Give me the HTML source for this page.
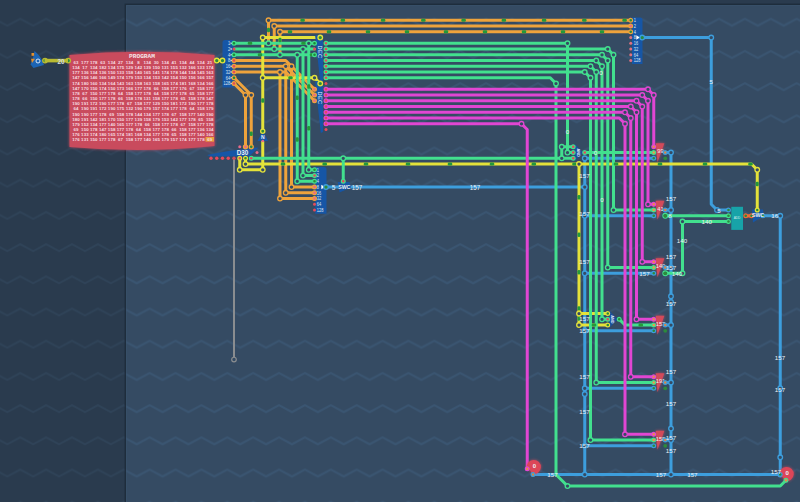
<!DOCTYPE html>
<html><head><meta charset="utf-8">
<style>html,body{margin:0;padding:0;background:#2a3b4e;width:800px;height:502px;overflow:hidden}
svg{display:block;font-family:"Liberation Sans",sans-serif}</style></head>
<body>
<svg width="800" height="502" viewBox="0 0 800 502">
<defs>
<pattern id="zo" x="20.25" y="14.75" width="25.88" height="32.2" patternUnits="userSpaceOnUse">
<path d="M-12.94 11 L0 4 L12.94 11 L25.88 4 L38.82 11" stroke="#2f4358" stroke-width="1.8" fill="none"/>
</pattern>
<pattern id="zp" x="20.25" y="14.75" width="25.88" height="32.2" patternUnits="userSpaceOnUse">
<path d="M-12.94 11 L0 4 L12.94 11 L25.88 4 L38.82 11" stroke="#3a5571" stroke-width="2.0" fill="none"/>
</pattern>
<filter id="glow" x="-10%" y="-10%" width="120%" height="120%"><feGaussianBlur stdDeviation="1.6"/></filter>
<filter id="glow2" x="-50%" y="-50%" width="200%" height="200%"><feGaussianBlur stdDeviation="1.5"/></filter>
<filter id="sh" x="-5%" y="-5%" width="110%" height="110%"><feGaussianBlur stdDeviation="0.6"/></filter>
</defs>
<rect width="800" height="502" fill="#2a3b4e"/>
<rect width="800" height="502" fill="url(#zo)"/>
<rect x="124.6" y="3.6" width="680" height="510" fill="#1e2b39" filter="url(#sh)" opacity="0.8"/>
<rect x="126" y="5" width="674" height="497" fill="#354b63"/>
<rect x="126" y="5" width="674" height="497" fill="url(#zp)"/>
<path d="M126.5 502 L126.5 5.5 L800 5.5" stroke="#3b5470" stroke-width="1" fill="none" opacity="0.4"/>
<path d="M69.5 55 Q142 48.5 214.5 55 L214.5 146 Q142 153.5 69.5 147 Z" fill="#d04a60" filter="url(#glow)" opacity="0.85"/><path d="M69.5 55 Q142 48.5 214.5 55 L214.5 146 Q142 153.5 69.5 147 Z" fill="#c94b5d"/><g transform="translate(0.001 0.001) scale(1.00001)"><text x="142" y="56.3" font-size="6.2" fill="#f4e6ea" text-anchor="middle" font-family="Liberation Mono" font-weight="bold" dominant-baseline="central">PROGRAM</text>
<rect x="205.5" y="137" width="8.5" height="4.6" fill="#e8a23c"/>
<text x="76" y="62.4" font-size="4.4" fill="#f8dce2" text-anchor="middle" font-family="Liberation Sans" font-weight="bold" letter-spacing="0.1" dominant-baseline="central">63</text>
<text x="84.92" y="62.4" font-size="4.4" fill="#f8dce2" text-anchor="middle" font-family="Liberation Sans" font-weight="bold" letter-spacing="0.1" dominant-baseline="central">177</text>
<text x="93.84" y="62.4" font-size="4.4" fill="#f8dce2" text-anchor="middle" font-family="Liberation Sans" font-weight="bold" letter-spacing="0.1" dominant-baseline="central">178</text>
<text x="102.76" y="62.4" font-size="4.4" fill="#f8dce2" text-anchor="middle" font-family="Liberation Sans" font-weight="bold" letter-spacing="0.1" dominant-baseline="central">63</text>
<text x="111.68" y="62.4" font-size="4.4" fill="#f8dce2" text-anchor="middle" font-family="Liberation Sans" font-weight="bold" letter-spacing="0.1" dominant-baseline="central">134</text>
<text x="120.6" y="62.4" font-size="4.4" fill="#f8dce2" text-anchor="middle" font-family="Liberation Sans" font-weight="bold" letter-spacing="0.1" dominant-baseline="central">27</text>
<text x="129.52" y="62.4" font-size="4.4" fill="#f8dce2" text-anchor="middle" font-family="Liberation Sans" font-weight="bold" letter-spacing="0.1" dominant-baseline="central">134</text>
<text x="138.44" y="62.4" font-size="4.4" fill="#f8dce2" text-anchor="middle" font-family="Liberation Sans" font-weight="bold" letter-spacing="0.1" dominant-baseline="central">8</text>
<text x="147.36" y="62.4" font-size="4.4" fill="#f8dce2" text-anchor="middle" font-family="Liberation Sans" font-weight="bold" letter-spacing="0.1" dominant-baseline="central">134</text>
<text x="156.28" y="62.4" font-size="4.4" fill="#f8dce2" text-anchor="middle" font-family="Liberation Sans" font-weight="bold" letter-spacing="0.1" dominant-baseline="central">30</text>
<text x="165.2" y="62.4" font-size="4.4" fill="#f8dce2" text-anchor="middle" font-family="Liberation Sans" font-weight="bold" letter-spacing="0.1" dominant-baseline="central">134</text>
<text x="174.12" y="62.4" font-size="4.4" fill="#f8dce2" text-anchor="middle" font-family="Liberation Sans" font-weight="bold" letter-spacing="0.1" dominant-baseline="central">41</text>
<text x="183.04" y="62.4" font-size="4.4" fill="#f8dce2" text-anchor="middle" font-family="Liberation Sans" font-weight="bold" letter-spacing="0.1" dominant-baseline="central">134</text>
<text x="191.96" y="62.4" font-size="4.4" fill="#f8dce2" text-anchor="middle" font-family="Liberation Sans" font-weight="bold" letter-spacing="0.1" dominant-baseline="central">44</text>
<text x="200.88" y="62.4" font-size="4.4" fill="#f8dce2" text-anchor="middle" font-family="Liberation Sans" font-weight="bold" letter-spacing="0.1" dominant-baseline="central">134</text>
<text x="209.8" y="62.4" font-size="4.4" fill="#f8dce2" text-anchor="middle" font-family="Liberation Sans" font-weight="bold" letter-spacing="0.1" dominant-baseline="central">21</text>
<text x="76" y="67.56" font-size="4.4" fill="#f8dce2" text-anchor="middle" font-family="Liberation Sans" font-weight="bold" letter-spacing="0.1" dominant-baseline="central">134</text>
<text x="84.92" y="67.56" font-size="4.4" fill="#f8dce2" text-anchor="middle" font-family="Liberation Sans" font-weight="bold" letter-spacing="0.1" dominant-baseline="central">17</text>
<text x="93.84" y="67.56" font-size="4.4" fill="#f8dce2" text-anchor="middle" font-family="Liberation Sans" font-weight="bold" letter-spacing="0.1" dominant-baseline="central">134</text>
<text x="102.76" y="67.56" font-size="4.4" fill="#f8dce2" text-anchor="middle" font-family="Liberation Sans" font-weight="bold" letter-spacing="0.1" dominant-baseline="central">182</text>
<text x="111.68" y="67.56" font-size="4.4" fill="#f8dce2" text-anchor="middle" font-family="Liberation Sans" font-weight="bold" letter-spacing="0.1" dominant-baseline="central">134</text>
<text x="120.6" y="67.56" font-size="4.4" fill="#f8dce2" text-anchor="middle" font-family="Liberation Sans" font-weight="bold" letter-spacing="0.1" dominant-baseline="central">175</text>
<text x="129.52" y="67.56" font-size="4.4" fill="#f8dce2" text-anchor="middle" font-family="Liberation Sans" font-weight="bold" letter-spacing="0.1" dominant-baseline="central">129</text>
<text x="138.44" y="67.56" font-size="4.4" fill="#f8dce2" text-anchor="middle" font-family="Liberation Sans" font-weight="bold" letter-spacing="0.1" dominant-baseline="central">142</text>
<text x="147.36" y="67.56" font-size="4.4" fill="#f8dce2" text-anchor="middle" font-family="Liberation Sans" font-weight="bold" letter-spacing="0.1" dominant-baseline="central">139</text>
<text x="156.28" y="67.56" font-size="4.4" fill="#f8dce2" text-anchor="middle" font-family="Liberation Sans" font-weight="bold" letter-spacing="0.1" dominant-baseline="central">150</text>
<text x="165.2" y="67.56" font-size="4.4" fill="#f8dce2" text-anchor="middle" font-family="Liberation Sans" font-weight="bold" letter-spacing="0.1" dominant-baseline="central">131</text>
<text x="174.12" y="67.56" font-size="4.4" fill="#f8dce2" text-anchor="middle" font-family="Liberation Sans" font-weight="bold" letter-spacing="0.1" dominant-baseline="central">155</text>
<text x="183.04" y="67.56" font-size="4.4" fill="#f8dce2" text-anchor="middle" font-family="Liberation Sans" font-weight="bold" letter-spacing="0.1" dominant-baseline="central">132</text>
<text x="191.96" y="67.56" font-size="4.4" fill="#f8dce2" text-anchor="middle" font-family="Liberation Sans" font-weight="bold" letter-spacing="0.1" dominant-baseline="central">166</text>
<text x="200.88" y="67.56" font-size="4.4" fill="#f8dce2" text-anchor="middle" font-family="Liberation Sans" font-weight="bold" letter-spacing="0.1" dominant-baseline="central">133</text>
<text x="209.8" y="67.56" font-size="4.4" fill="#f8dce2" text-anchor="middle" font-family="Liberation Sans" font-weight="bold" letter-spacing="0.1" dominant-baseline="central">174</text>
<text x="76" y="72.72" font-size="4.4" fill="#f8dce2" text-anchor="middle" font-family="Liberation Sans" font-weight="bold" letter-spacing="0.1" dominant-baseline="central">177</text>
<text x="84.92" y="72.72" font-size="4.4" fill="#f8dce2" text-anchor="middle" font-family="Liberation Sans" font-weight="bold" letter-spacing="0.1" dominant-baseline="central">136</text>
<text x="93.84" y="72.72" font-size="4.4" fill="#f8dce2" text-anchor="middle" font-family="Liberation Sans" font-weight="bold" letter-spacing="0.1" dominant-baseline="central">134</text>
<text x="102.76" y="72.72" font-size="4.4" fill="#f8dce2" text-anchor="middle" font-family="Liberation Sans" font-weight="bold" letter-spacing="0.1" dominant-baseline="central">136</text>
<text x="111.68" y="72.72" font-size="4.4" fill="#f8dce2" text-anchor="middle" font-family="Liberation Sans" font-weight="bold" letter-spacing="0.1" dominant-baseline="central">150</text>
<text x="120.6" y="72.72" font-size="4.4" fill="#f8dce2" text-anchor="middle" font-family="Liberation Sans" font-weight="bold" letter-spacing="0.1" dominant-baseline="central">133</text>
<text x="129.52" y="72.72" font-size="4.4" fill="#f8dce2" text-anchor="middle" font-family="Liberation Sans" font-weight="bold" letter-spacing="0.1" dominant-baseline="central">158</text>
<text x="138.44" y="72.72" font-size="4.4" fill="#f8dce2" text-anchor="middle" font-family="Liberation Sans" font-weight="bold" letter-spacing="0.1" dominant-baseline="central">140</text>
<text x="147.36" y="72.72" font-size="4.4" fill="#f8dce2" text-anchor="middle" font-family="Liberation Sans" font-weight="bold" letter-spacing="0.1" dominant-baseline="central">165</text>
<text x="156.28" y="72.72" font-size="4.4" fill="#f8dce2" text-anchor="middle" font-family="Liberation Sans" font-weight="bold" letter-spacing="0.1" dominant-baseline="central">141</text>
<text x="165.2" y="72.72" font-size="4.4" fill="#f8dce2" text-anchor="middle" font-family="Liberation Sans" font-weight="bold" letter-spacing="0.1" dominant-baseline="central">174</text>
<text x="174.12" y="72.72" font-size="4.4" fill="#f8dce2" text-anchor="middle" font-family="Liberation Sans" font-weight="bold" letter-spacing="0.1" dominant-baseline="central">178</text>
<text x="183.04" y="72.72" font-size="4.4" fill="#f8dce2" text-anchor="middle" font-family="Liberation Sans" font-weight="bold" letter-spacing="0.1" dominant-baseline="central">144</text>
<text x="191.96" y="72.72" font-size="4.4" fill="#f8dce2" text-anchor="middle" font-family="Liberation Sans" font-weight="bold" letter-spacing="0.1" dominant-baseline="central">134</text>
<text x="200.88" y="72.72" font-size="4.4" fill="#f8dce2" text-anchor="middle" font-family="Liberation Sans" font-weight="bold" letter-spacing="0.1" dominant-baseline="central">145</text>
<text x="209.8" y="72.72" font-size="4.4" fill="#f8dce2" text-anchor="middle" font-family="Liberation Sans" font-weight="bold" letter-spacing="0.1" dominant-baseline="central">163</text>
<text x="76" y="77.88" font-size="4.4" fill="#f8dce2" text-anchor="middle" font-family="Liberation Sans" font-weight="bold" letter-spacing="0.1" dominant-baseline="central">147</text>
<text x="84.92" y="77.88" font-size="4.4" fill="#f8dce2" text-anchor="middle" font-family="Liberation Sans" font-weight="bold" letter-spacing="0.1" dominant-baseline="central">156</text>
<text x="93.84" y="77.88" font-size="4.4" fill="#f8dce2" text-anchor="middle" font-family="Liberation Sans" font-weight="bold" letter-spacing="0.1" dominant-baseline="central">146</text>
<text x="102.76" y="77.88" font-size="4.4" fill="#f8dce2" text-anchor="middle" font-family="Liberation Sans" font-weight="bold" letter-spacing="0.1" dominant-baseline="central">166</text>
<text x="111.68" y="77.88" font-size="4.4" fill="#f8dce2" text-anchor="middle" font-family="Liberation Sans" font-weight="bold" letter-spacing="0.1" dominant-baseline="central">149</text>
<text x="120.6" y="77.88" font-size="4.4" fill="#f8dce2" text-anchor="middle" font-family="Liberation Sans" font-weight="bold" letter-spacing="0.1" dominant-baseline="central">174</text>
<text x="129.52" y="77.88" font-size="4.4" fill="#f8dce2" text-anchor="middle" font-family="Liberation Sans" font-weight="bold" letter-spacing="0.1" dominant-baseline="central">179</text>
<text x="138.44" y="77.88" font-size="4.4" fill="#f8dce2" text-anchor="middle" font-family="Liberation Sans" font-weight="bold" letter-spacing="0.1" dominant-baseline="central">153</text>
<text x="147.36" y="77.88" font-size="4.4" fill="#f8dce2" text-anchor="middle" font-family="Liberation Sans" font-weight="bold" letter-spacing="0.1" dominant-baseline="central">134</text>
<text x="156.28" y="77.88" font-size="4.4" fill="#f8dce2" text-anchor="middle" font-family="Liberation Sans" font-weight="bold" letter-spacing="0.1" dominant-baseline="central">153</text>
<text x="165.2" y="77.88" font-size="4.4" fill="#f8dce2" text-anchor="middle" font-family="Liberation Sans" font-weight="bold" letter-spacing="0.1" dominant-baseline="central">142</text>
<text x="174.12" y="77.88" font-size="4.4" fill="#f8dce2" text-anchor="middle" font-family="Liberation Sans" font-weight="bold" letter-spacing="0.1" dominant-baseline="central">154</text>
<text x="183.04" y="77.88" font-size="4.4" fill="#f8dce2" text-anchor="middle" font-family="Liberation Sans" font-weight="bold" letter-spacing="0.1" dominant-baseline="central">150</text>
<text x="191.96" y="77.88" font-size="4.4" fill="#f8dce2" text-anchor="middle" font-family="Liberation Sans" font-weight="bold" letter-spacing="0.1" dominant-baseline="central">156</text>
<text x="200.88" y="77.88" font-size="4.4" fill="#f8dce2" text-anchor="middle" font-family="Liberation Sans" font-weight="bold" letter-spacing="0.1" dominant-baseline="central">166</text>
<text x="209.8" y="77.88" font-size="4.4" fill="#f8dce2" text-anchor="middle" font-family="Liberation Sans" font-weight="bold" letter-spacing="0.1" dominant-baseline="central">157</text>
<text x="76" y="83.04" font-size="4.4" fill="#f8dce2" text-anchor="middle" font-family="Liberation Sans" font-weight="bold" letter-spacing="0.1" dominant-baseline="central">174</text>
<text x="84.92" y="83.04" font-size="4.4" fill="#f8dce2" text-anchor="middle" font-family="Liberation Sans" font-weight="bold" letter-spacing="0.1" dominant-baseline="central">180</text>
<text x="93.84" y="83.04" font-size="4.4" fill="#f8dce2" text-anchor="middle" font-family="Liberation Sans" font-weight="bold" letter-spacing="0.1" dominant-baseline="central">160</text>
<text x="102.76" y="83.04" font-size="4.4" fill="#f8dce2" text-anchor="middle" font-family="Liberation Sans" font-weight="bold" letter-spacing="0.1" dominant-baseline="central">134</text>
<text x="111.68" y="83.04" font-size="4.4" fill="#f8dce2" text-anchor="middle" font-family="Liberation Sans" font-weight="bold" letter-spacing="0.1" dominant-baseline="central">164</text>
<text x="120.6" y="83.04" font-size="4.4" fill="#f8dce2" text-anchor="middle" font-family="Liberation Sans" font-weight="bold" letter-spacing="0.1" dominant-baseline="central">143</text>
<text x="129.52" y="83.04" font-size="4.4" fill="#f8dce2" text-anchor="middle" font-family="Liberation Sans" font-weight="bold" letter-spacing="0.1" dominant-baseline="central">163</text>
<text x="138.44" y="83.04" font-size="4.4" fill="#f8dce2" text-anchor="middle" font-family="Liberation Sans" font-weight="bold" letter-spacing="0.1" dominant-baseline="central">158</text>
<text x="147.36" y="83.04" font-size="4.4" fill="#f8dce2" text-anchor="middle" font-family="Liberation Sans" font-weight="bold" letter-spacing="0.1" dominant-baseline="central">163</text>
<text x="156.28" y="83.04" font-size="4.4" fill="#f8dce2" text-anchor="middle" font-family="Liberation Sans" font-weight="bold" letter-spacing="0.1" dominant-baseline="central">158</text>
<text x="165.2" y="83.04" font-size="4.4" fill="#f8dce2" text-anchor="middle" font-family="Liberation Sans" font-weight="bold" letter-spacing="0.1" dominant-baseline="central">165</text>
<text x="174.12" y="83.04" font-size="4.4" fill="#f8dce2" text-anchor="middle" font-family="Liberation Sans" font-weight="bold" letter-spacing="0.1" dominant-baseline="central">174</text>
<text x="183.04" y="83.04" font-size="4.4" fill="#f8dce2" text-anchor="middle" font-family="Liberation Sans" font-weight="bold" letter-spacing="0.1" dominant-baseline="central">181</text>
<text x="191.96" y="83.04" font-size="4.4" fill="#f8dce2" text-anchor="middle" font-family="Liberation Sans" font-weight="bold" letter-spacing="0.1" dominant-baseline="central">168</text>
<text x="200.88" y="83.04" font-size="4.4" fill="#f8dce2" text-anchor="middle" font-family="Liberation Sans" font-weight="bold" letter-spacing="0.1" dominant-baseline="central">134</text>
<text x="209.8" y="83.04" font-size="4.4" fill="#f8dce2" text-anchor="middle" font-family="Liberation Sans" font-weight="bold" letter-spacing="0.1" dominant-baseline="central">166</text>
<text x="76" y="88.2" font-size="4.4" fill="#f8dce2" text-anchor="middle" font-family="Liberation Sans" font-weight="bold" letter-spacing="0.1" dominant-baseline="central">147</text>
<text x="84.92" y="88.2" font-size="4.4" fill="#f8dce2" text-anchor="middle" font-family="Liberation Sans" font-weight="bold" letter-spacing="0.1" dominant-baseline="central">170</text>
<text x="93.84" y="88.2" font-size="4.4" fill="#f8dce2" text-anchor="middle" font-family="Liberation Sans" font-weight="bold" letter-spacing="0.1" dominant-baseline="central">150</text>
<text x="102.76" y="88.2" font-size="4.4" fill="#f8dce2" text-anchor="middle" font-family="Liberation Sans" font-weight="bold" letter-spacing="0.1" dominant-baseline="central">174</text>
<text x="111.68" y="88.2" font-size="4.4" fill="#f8dce2" text-anchor="middle" font-family="Liberation Sans" font-weight="bold" letter-spacing="0.1" dominant-baseline="central">150</text>
<text x="120.6" y="88.2" font-size="4.4" fill="#f8dce2" text-anchor="middle" font-family="Liberation Sans" font-weight="bold" letter-spacing="0.1" dominant-baseline="central">173</text>
<text x="129.52" y="88.2" font-size="4.4" fill="#f8dce2" text-anchor="middle" font-family="Liberation Sans" font-weight="bold" letter-spacing="0.1" dominant-baseline="central">166</text>
<text x="138.44" y="88.2" font-size="4.4" fill="#f8dce2" text-anchor="middle" font-family="Liberation Sans" font-weight="bold" letter-spacing="0.1" dominant-baseline="central">177</text>
<text x="147.36" y="88.2" font-size="4.4" fill="#f8dce2" text-anchor="middle" font-family="Liberation Sans" font-weight="bold" letter-spacing="0.1" dominant-baseline="central">178</text>
<text x="156.28" y="88.2" font-size="4.4" fill="#f8dce2" text-anchor="middle" font-family="Liberation Sans" font-weight="bold" letter-spacing="0.1" dominant-baseline="central">66</text>
<text x="165.2" y="88.2" font-size="4.4" fill="#f8dce2" text-anchor="middle" font-family="Liberation Sans" font-weight="bold" letter-spacing="0.1" dominant-baseline="central">158</text>
<text x="174.12" y="88.2" font-size="4.4" fill="#f8dce2" text-anchor="middle" font-family="Liberation Sans" font-weight="bold" letter-spacing="0.1" dominant-baseline="central">177</text>
<text x="183.04" y="88.2" font-size="4.4" fill="#f8dce2" text-anchor="middle" font-family="Liberation Sans" font-weight="bold" letter-spacing="0.1" dominant-baseline="central">176</text>
<text x="191.96" y="88.2" font-size="4.4" fill="#f8dce2" text-anchor="middle" font-family="Liberation Sans" font-weight="bold" letter-spacing="0.1" dominant-baseline="central">67</text>
<text x="200.88" y="88.2" font-size="4.4" fill="#f8dce2" text-anchor="middle" font-family="Liberation Sans" font-weight="bold" letter-spacing="0.1" dominant-baseline="central">158</text>
<text x="209.8" y="88.2" font-size="4.4" fill="#f8dce2" text-anchor="middle" font-family="Liberation Sans" font-weight="bold" letter-spacing="0.1" dominant-baseline="central">177</text>
<text x="76" y="93.36" font-size="4.4" fill="#f8dce2" text-anchor="middle" font-family="Liberation Sans" font-weight="bold" letter-spacing="0.1" dominant-baseline="central">178</text>
<text x="84.92" y="93.36" font-size="4.4" fill="#f8dce2" text-anchor="middle" font-family="Liberation Sans" font-weight="bold" letter-spacing="0.1" dominant-baseline="central">67</text>
<text x="93.84" y="93.36" font-size="4.4" fill="#f8dce2" text-anchor="middle" font-family="Liberation Sans" font-weight="bold" letter-spacing="0.1" dominant-baseline="central">150</text>
<text x="102.76" y="93.36" font-size="4.4" fill="#f8dce2" text-anchor="middle" font-family="Liberation Sans" font-weight="bold" letter-spacing="0.1" dominant-baseline="central">177</text>
<text x="111.68" y="93.36" font-size="4.4" fill="#f8dce2" text-anchor="middle" font-family="Liberation Sans" font-weight="bold" letter-spacing="0.1" dominant-baseline="central">178</text>
<text x="120.6" y="93.36" font-size="4.4" fill="#f8dce2" text-anchor="middle" font-family="Liberation Sans" font-weight="bold" letter-spacing="0.1" dominant-baseline="central">64</text>
<text x="129.52" y="93.36" font-size="4.4" fill="#f8dce2" text-anchor="middle" font-family="Liberation Sans" font-weight="bold" letter-spacing="0.1" dominant-baseline="central">158</text>
<text x="138.44" y="93.36" font-size="4.4" fill="#f8dce2" text-anchor="middle" font-family="Liberation Sans" font-weight="bold" letter-spacing="0.1" dominant-baseline="central">177</text>
<text x="147.36" y="93.36" font-size="4.4" fill="#f8dce2" text-anchor="middle" font-family="Liberation Sans" font-weight="bold" letter-spacing="0.1" dominant-baseline="central">178</text>
<text x="156.28" y="93.36" font-size="4.4" fill="#f8dce2" text-anchor="middle" font-family="Liberation Sans" font-weight="bold" letter-spacing="0.1" dominant-baseline="central">64</text>
<text x="165.2" y="93.36" font-size="4.4" fill="#f8dce2" text-anchor="middle" font-family="Liberation Sans" font-weight="bold" letter-spacing="0.1" dominant-baseline="central">158</text>
<text x="174.12" y="93.36" font-size="4.4" fill="#f8dce2" text-anchor="middle" font-family="Liberation Sans" font-weight="bold" letter-spacing="0.1" dominant-baseline="central">177</text>
<text x="183.04" y="93.36" font-size="4.4" fill="#f8dce2" text-anchor="middle" font-family="Liberation Sans" font-weight="bold" letter-spacing="0.1" dominant-baseline="central">178</text>
<text x="191.96" y="93.36" font-size="4.4" fill="#f8dce2" text-anchor="middle" font-family="Liberation Sans" font-weight="bold" letter-spacing="0.1" dominant-baseline="central">65</text>
<text x="200.88" y="93.36" font-size="4.4" fill="#f8dce2" text-anchor="middle" font-family="Liberation Sans" font-weight="bold" letter-spacing="0.1" dominant-baseline="central">158</text>
<text x="209.8" y="93.36" font-size="4.4" fill="#f8dce2" text-anchor="middle" font-family="Liberation Sans" font-weight="bold" letter-spacing="0.1" dominant-baseline="central">177</text>
<text x="76" y="98.52" font-size="4.4" fill="#f8dce2" text-anchor="middle" font-family="Liberation Sans" font-weight="bold" letter-spacing="0.1" dominant-baseline="central">178</text>
<text x="84.92" y="98.52" font-size="4.4" fill="#f8dce2" text-anchor="middle" font-family="Liberation Sans" font-weight="bold" letter-spacing="0.1" dominant-baseline="central">66</text>
<text x="93.84" y="98.52" font-size="4.4" fill="#f8dce2" text-anchor="middle" font-family="Liberation Sans" font-weight="bold" letter-spacing="0.1" dominant-baseline="central">150</text>
<text x="102.76" y="98.52" font-size="4.4" fill="#f8dce2" text-anchor="middle" font-family="Liberation Sans" font-weight="bold" letter-spacing="0.1" dominant-baseline="central">177</text>
<text x="111.68" y="98.52" font-size="4.4" fill="#f8dce2" text-anchor="middle" font-family="Liberation Sans" font-weight="bold" letter-spacing="0.1" dominant-baseline="central">178</text>
<text x="120.6" y="98.52" font-size="4.4" fill="#f8dce2" text-anchor="middle" font-family="Liberation Sans" font-weight="bold" letter-spacing="0.1" dominant-baseline="central">66</text>
<text x="129.52" y="98.52" font-size="4.4" fill="#f8dce2" text-anchor="middle" font-family="Liberation Sans" font-weight="bold" letter-spacing="0.1" dominant-baseline="central">158</text>
<text x="138.44" y="98.52" font-size="4.4" fill="#f8dce2" text-anchor="middle" font-family="Liberation Sans" font-weight="bold" letter-spacing="0.1" dominant-baseline="central">178</text>
<text x="147.36" y="98.52" font-size="4.4" fill="#f8dce2" text-anchor="middle" font-family="Liberation Sans" font-weight="bold" letter-spacing="0.1" dominant-baseline="central">131</text>
<text x="156.28" y="98.52" font-size="4.4" fill="#f8dce2" text-anchor="middle" font-family="Liberation Sans" font-weight="bold" letter-spacing="0.1" dominant-baseline="central">158</text>
<text x="165.2" y="98.52" font-size="4.4" fill="#f8dce2" text-anchor="middle" font-family="Liberation Sans" font-weight="bold" letter-spacing="0.1" dominant-baseline="central">177</text>
<text x="174.12" y="98.52" font-size="4.4" fill="#f8dce2" text-anchor="middle" font-family="Liberation Sans" font-weight="bold" letter-spacing="0.1" dominant-baseline="central">178</text>
<text x="183.04" y="98.52" font-size="4.4" fill="#f8dce2" text-anchor="middle" font-family="Liberation Sans" font-weight="bold" letter-spacing="0.1" dominant-baseline="central">65</text>
<text x="191.96" y="98.52" font-size="4.4" fill="#f8dce2" text-anchor="middle" font-family="Liberation Sans" font-weight="bold" letter-spacing="0.1" dominant-baseline="central">158</text>
<text x="200.88" y="98.52" font-size="4.4" fill="#f8dce2" text-anchor="middle" font-family="Liberation Sans" font-weight="bold" letter-spacing="0.1" dominant-baseline="central">178</text>
<text x="209.8" y="98.52" font-size="4.4" fill="#f8dce2" text-anchor="middle" font-family="Liberation Sans" font-weight="bold" letter-spacing="0.1" dominant-baseline="central">147</text>
<text x="76" y="103.68" font-size="4.4" fill="#f8dce2" text-anchor="middle" font-family="Liberation Sans" font-weight="bold" letter-spacing="0.1" dominant-baseline="central">190</text>
<text x="84.92" y="103.68" font-size="4.4" fill="#f8dce2" text-anchor="middle" font-family="Liberation Sans" font-weight="bold" letter-spacing="0.1" dominant-baseline="central">191</text>
<text x="93.84" y="103.68" font-size="4.4" fill="#f8dce2" text-anchor="middle" font-family="Liberation Sans" font-weight="bold" letter-spacing="0.1" dominant-baseline="central">172</text>
<text x="102.76" y="103.68" font-size="4.4" fill="#f8dce2" text-anchor="middle" font-family="Liberation Sans" font-weight="bold" letter-spacing="0.1" dominant-baseline="central">190</text>
<text x="111.68" y="103.68" font-size="4.4" fill="#f8dce2" text-anchor="middle" font-family="Liberation Sans" font-weight="bold" letter-spacing="0.1" dominant-baseline="central">177</text>
<text x="120.6" y="103.68" font-size="4.4" fill="#f8dce2" text-anchor="middle" font-family="Liberation Sans" font-weight="bold" letter-spacing="0.1" dominant-baseline="central">178</text>
<text x="129.52" y="103.68" font-size="4.4" fill="#f8dce2" text-anchor="middle" font-family="Liberation Sans" font-weight="bold" letter-spacing="0.1" dominant-baseline="central">67</text>
<text x="138.44" y="103.68" font-size="4.4" fill="#f8dce2" text-anchor="middle" font-family="Liberation Sans" font-weight="bold" letter-spacing="0.1" dominant-baseline="central">158</text>
<text x="147.36" y="103.68" font-size="4.4" fill="#f8dce2" text-anchor="middle" font-family="Liberation Sans" font-weight="bold" letter-spacing="0.1" dominant-baseline="central">177</text>
<text x="156.28" y="103.68" font-size="4.4" fill="#f8dce2" text-anchor="middle" font-family="Liberation Sans" font-weight="bold" letter-spacing="0.1" dominant-baseline="central">129</text>
<text x="165.2" y="103.68" font-size="4.4" fill="#f8dce2" text-anchor="middle" font-family="Liberation Sans" font-weight="bold" letter-spacing="0.1" dominant-baseline="central">150</text>
<text x="174.12" y="103.68" font-size="4.4" fill="#f8dce2" text-anchor="middle" font-family="Liberation Sans" font-weight="bold" letter-spacing="0.1" dominant-baseline="central">181</text>
<text x="183.04" y="103.68" font-size="4.4" fill="#f8dce2" text-anchor="middle" font-family="Liberation Sans" font-weight="bold" letter-spacing="0.1" dominant-baseline="central">172</text>
<text x="191.96" y="103.68" font-size="4.4" fill="#f8dce2" text-anchor="middle" font-family="Liberation Sans" font-weight="bold" letter-spacing="0.1" dominant-baseline="central">190</text>
<text x="200.88" y="103.68" font-size="4.4" fill="#f8dce2" text-anchor="middle" font-family="Liberation Sans" font-weight="bold" letter-spacing="0.1" dominant-baseline="central">177</text>
<text x="209.8" y="103.68" font-size="4.4" fill="#f8dce2" text-anchor="middle" font-family="Liberation Sans" font-weight="bold" letter-spacing="0.1" dominant-baseline="central">178</text>
<text x="76" y="108.84" font-size="4.4" fill="#f8dce2" text-anchor="middle" font-family="Liberation Sans" font-weight="bold" letter-spacing="0.1" dominant-baseline="central">64</text>
<text x="84.92" y="108.84" font-size="4.4" fill="#f8dce2" text-anchor="middle" font-family="Liberation Sans" font-weight="bold" letter-spacing="0.1" dominant-baseline="central">190</text>
<text x="93.84" y="108.84" font-size="4.4" fill="#f8dce2" text-anchor="middle" font-family="Liberation Sans" font-weight="bold" letter-spacing="0.1" dominant-baseline="central">191</text>
<text x="102.76" y="108.84" font-size="4.4" fill="#f8dce2" text-anchor="middle" font-family="Liberation Sans" font-weight="bold" letter-spacing="0.1" dominant-baseline="central">172</text>
<text x="111.68" y="108.84" font-size="4.4" fill="#f8dce2" text-anchor="middle" font-family="Liberation Sans" font-weight="bold" letter-spacing="0.1" dominant-baseline="central">190</text>
<text x="120.6" y="108.84" font-size="4.4" fill="#f8dce2" text-anchor="middle" font-family="Liberation Sans" font-weight="bold" letter-spacing="0.1" dominant-baseline="central">175</text>
<text x="129.52" y="108.84" font-size="4.4" fill="#f8dce2" text-anchor="middle" font-family="Liberation Sans" font-weight="bold" letter-spacing="0.1" dominant-baseline="central">132</text>
<text x="138.44" y="108.84" font-size="4.4" fill="#f8dce2" text-anchor="middle" font-family="Liberation Sans" font-weight="bold" letter-spacing="0.1" dominant-baseline="central">190</text>
<text x="147.36" y="108.84" font-size="4.4" fill="#f8dce2" text-anchor="middle" font-family="Liberation Sans" font-weight="bold" letter-spacing="0.1" dominant-baseline="central">179</text>
<text x="156.28" y="108.84" font-size="4.4" fill="#f8dce2" text-anchor="middle" font-family="Liberation Sans" font-weight="bold" letter-spacing="0.1" dominant-baseline="central">157</text>
<text x="165.2" y="108.84" font-size="4.4" fill="#f8dce2" text-anchor="middle" font-family="Liberation Sans" font-weight="bold" letter-spacing="0.1" dominant-baseline="central">174</text>
<text x="174.12" y="108.84" font-size="4.4" fill="#f8dce2" text-anchor="middle" font-family="Liberation Sans" font-weight="bold" letter-spacing="0.1" dominant-baseline="central">177</text>
<text x="183.04" y="108.84" font-size="4.4" fill="#f8dce2" text-anchor="middle" font-family="Liberation Sans" font-weight="bold" letter-spacing="0.1" dominant-baseline="central">178</text>
<text x="191.96" y="108.84" font-size="4.4" fill="#f8dce2" text-anchor="middle" font-family="Liberation Sans" font-weight="bold" letter-spacing="0.1" dominant-baseline="central">64</text>
<text x="200.88" y="108.84" font-size="4.4" fill="#f8dce2" text-anchor="middle" font-family="Liberation Sans" font-weight="bold" letter-spacing="0.1" dominant-baseline="central">158</text>
<text x="209.8" y="108.84" font-size="4.4" fill="#f8dce2" text-anchor="middle" font-family="Liberation Sans" font-weight="bold" letter-spacing="0.1" dominant-baseline="central">179</text>
<text x="76" y="114" font-size="4.4" fill="#f8dce2" text-anchor="middle" font-family="Liberation Sans" font-weight="bold" letter-spacing="0.1" dominant-baseline="central">190</text>
<text x="84.92" y="114" font-size="4.4" fill="#f8dce2" text-anchor="middle" font-family="Liberation Sans" font-weight="bold" letter-spacing="0.1" dominant-baseline="central">190</text>
<text x="93.84" y="114" font-size="4.4" fill="#f8dce2" text-anchor="middle" font-family="Liberation Sans" font-weight="bold" letter-spacing="0.1" dominant-baseline="central">177</text>
<text x="102.76" y="114" font-size="4.4" fill="#f8dce2" text-anchor="middle" font-family="Liberation Sans" font-weight="bold" letter-spacing="0.1" dominant-baseline="central">178</text>
<text x="111.68" y="114" font-size="4.4" fill="#f8dce2" text-anchor="middle" font-family="Liberation Sans" font-weight="bold" letter-spacing="0.1" dominant-baseline="central">69</text>
<text x="120.6" y="114" font-size="4.4" fill="#f8dce2" text-anchor="middle" font-family="Liberation Sans" font-weight="bold" letter-spacing="0.1" dominant-baseline="central">158</text>
<text x="129.52" y="114" font-size="4.4" fill="#f8dce2" text-anchor="middle" font-family="Liberation Sans" font-weight="bold" letter-spacing="0.1" dominant-baseline="central">178</text>
<text x="138.44" y="114" font-size="4.4" fill="#f8dce2" text-anchor="middle" font-family="Liberation Sans" font-weight="bold" letter-spacing="0.1" dominant-baseline="central">144</text>
<text x="147.36" y="114" font-size="4.4" fill="#f8dce2" text-anchor="middle" font-family="Liberation Sans" font-weight="bold" letter-spacing="0.1" dominant-baseline="central">134</text>
<text x="156.28" y="114" font-size="4.4" fill="#f8dce2" text-anchor="middle" font-family="Liberation Sans" font-weight="bold" letter-spacing="0.1" dominant-baseline="central">177</text>
<text x="165.2" y="114" font-size="4.4" fill="#f8dce2" text-anchor="middle" font-family="Liberation Sans" font-weight="bold" letter-spacing="0.1" dominant-baseline="central">178</text>
<text x="174.12" y="114" font-size="4.4" fill="#f8dce2" text-anchor="middle" font-family="Liberation Sans" font-weight="bold" letter-spacing="0.1" dominant-baseline="central">67</text>
<text x="183.04" y="114" font-size="4.4" fill="#f8dce2" text-anchor="middle" font-family="Liberation Sans" font-weight="bold" letter-spacing="0.1" dominant-baseline="central">158</text>
<text x="191.96" y="114" font-size="4.4" fill="#f8dce2" text-anchor="middle" font-family="Liberation Sans" font-weight="bold" letter-spacing="0.1" dominant-baseline="central">177</text>
<text x="200.88" y="114" font-size="4.4" fill="#f8dce2" text-anchor="middle" font-family="Liberation Sans" font-weight="bold" letter-spacing="0.1" dominant-baseline="central">140</text>
<text x="209.8" y="114" font-size="4.4" fill="#f8dce2" text-anchor="middle" font-family="Liberation Sans" font-weight="bold" letter-spacing="0.1" dominant-baseline="central">190</text>
<text x="76" y="119.16" font-size="4.4" fill="#f8dce2" text-anchor="middle" font-family="Liberation Sans" font-weight="bold" letter-spacing="0.1" dominant-baseline="central">180</text>
<text x="84.92" y="119.16" font-size="4.4" fill="#f8dce2" text-anchor="middle" font-family="Liberation Sans" font-weight="bold" letter-spacing="0.1" dominant-baseline="central">191</text>
<text x="93.84" y="119.16" font-size="4.4" fill="#f8dce2" text-anchor="middle" font-family="Liberation Sans" font-weight="bold" letter-spacing="0.1" dominant-baseline="central">142</text>
<text x="102.76" y="119.16" font-size="4.4" fill="#f8dce2" text-anchor="middle" font-family="Liberation Sans" font-weight="bold" letter-spacing="0.1" dominant-baseline="central">181</text>
<text x="111.68" y="119.16" font-size="4.4" fill="#f8dce2" text-anchor="middle" font-family="Liberation Sans" font-weight="bold" letter-spacing="0.1" dominant-baseline="central">170</text>
<text x="120.6" y="119.16" font-size="4.4" fill="#f8dce2" text-anchor="middle" font-family="Liberation Sans" font-weight="bold" letter-spacing="0.1" dominant-baseline="central">150</text>
<text x="129.52" y="119.16" font-size="4.4" fill="#f8dce2" text-anchor="middle" font-family="Liberation Sans" font-weight="bold" letter-spacing="0.1" dominant-baseline="central">177</text>
<text x="138.44" y="119.16" font-size="4.4" fill="#f8dce2" text-anchor="middle" font-family="Liberation Sans" font-weight="bold" letter-spacing="0.1" dominant-baseline="central">139</text>
<text x="147.36" y="119.16" font-size="4.4" fill="#f8dce2" text-anchor="middle" font-family="Liberation Sans" font-weight="bold" letter-spacing="0.1" dominant-baseline="central">158</text>
<text x="156.28" y="119.16" font-size="4.4" fill="#f8dce2" text-anchor="middle" font-family="Liberation Sans" font-weight="bold" letter-spacing="0.1" dominant-baseline="central">179</text>
<text x="165.2" y="119.16" font-size="4.4" fill="#f8dce2" text-anchor="middle" font-family="Liberation Sans" font-weight="bold" letter-spacing="0.1" dominant-baseline="central">153</text>
<text x="174.12" y="119.16" font-size="4.4" fill="#f8dce2" text-anchor="middle" font-family="Liberation Sans" font-weight="bold" letter-spacing="0.1" dominant-baseline="central">142</text>
<text x="183.04" y="119.16" font-size="4.4" fill="#f8dce2" text-anchor="middle" font-family="Liberation Sans" font-weight="bold" letter-spacing="0.1" dominant-baseline="central">177</text>
<text x="191.96" y="119.16" font-size="4.4" fill="#f8dce2" text-anchor="middle" font-family="Liberation Sans" font-weight="bold" letter-spacing="0.1" dominant-baseline="central">178</text>
<text x="200.88" y="119.16" font-size="4.4" fill="#f8dce2" text-anchor="middle" font-family="Liberation Sans" font-weight="bold" letter-spacing="0.1" dominant-baseline="central">65</text>
<text x="209.8" y="119.16" font-size="4.4" fill="#f8dce2" text-anchor="middle" font-family="Liberation Sans" font-weight="bold" letter-spacing="0.1" dominant-baseline="central">158</text>
<text x="76" y="124.32" font-size="4.4" fill="#f8dce2" text-anchor="middle" font-family="Liberation Sans" font-weight="bold" letter-spacing="0.1" dominant-baseline="central">179</text>
<text x="84.92" y="124.32" font-size="4.4" fill="#f8dce2" text-anchor="middle" font-family="Liberation Sans" font-weight="bold" letter-spacing="0.1" dominant-baseline="central">152</text>
<text x="93.84" y="124.32" font-size="4.4" fill="#f8dce2" text-anchor="middle" font-family="Liberation Sans" font-weight="bold" letter-spacing="0.1" dominant-baseline="central">134</text>
<text x="102.76" y="124.32" font-size="4.4" fill="#f8dce2" text-anchor="middle" font-family="Liberation Sans" font-weight="bold" letter-spacing="0.1" dominant-baseline="central">177</text>
<text x="111.68" y="124.32" font-size="4.4" fill="#f8dce2" text-anchor="middle" font-family="Liberation Sans" font-weight="bold" letter-spacing="0.1" dominant-baseline="central">140</text>
<text x="120.6" y="124.32" font-size="4.4" fill="#f8dce2" text-anchor="middle" font-family="Liberation Sans" font-weight="bold" letter-spacing="0.1" dominant-baseline="central">165</text>
<text x="129.52" y="124.32" font-size="4.4" fill="#f8dce2" text-anchor="middle" font-family="Liberation Sans" font-weight="bold" letter-spacing="0.1" dominant-baseline="central">177</text>
<text x="138.44" y="124.32" font-size="4.4" fill="#f8dce2" text-anchor="middle" font-family="Liberation Sans" font-weight="bold" letter-spacing="0.1" dominant-baseline="central">178</text>
<text x="147.36" y="124.32" font-size="4.4" fill="#f8dce2" text-anchor="middle" font-family="Liberation Sans" font-weight="bold" letter-spacing="0.1" dominant-baseline="central">66</text>
<text x="156.28" y="124.32" font-size="4.4" fill="#f8dce2" text-anchor="middle" font-family="Liberation Sans" font-weight="bold" letter-spacing="0.1" dominant-baseline="central">158</text>
<text x="165.2" y="124.32" font-size="4.4" fill="#f8dce2" text-anchor="middle" font-family="Liberation Sans" font-weight="bold" letter-spacing="0.1" dominant-baseline="central">177</text>
<text x="174.12" y="124.32" font-size="4.4" fill="#f8dce2" text-anchor="middle" font-family="Liberation Sans" font-weight="bold" letter-spacing="0.1" dominant-baseline="central">178</text>
<text x="183.04" y="124.32" font-size="4.4" fill="#f8dce2" text-anchor="middle" font-family="Liberation Sans" font-weight="bold" letter-spacing="0.1" dominant-baseline="central">67</text>
<text x="191.96" y="124.32" font-size="4.4" fill="#f8dce2" text-anchor="middle" font-family="Liberation Sans" font-weight="bold" letter-spacing="0.1" dominant-baseline="central">158</text>
<text x="200.88" y="124.32" font-size="4.4" fill="#f8dce2" text-anchor="middle" font-family="Liberation Sans" font-weight="bold" letter-spacing="0.1" dominant-baseline="central">177</text>
<text x="209.8" y="124.32" font-size="4.4" fill="#f8dce2" text-anchor="middle" font-family="Liberation Sans" font-weight="bold" letter-spacing="0.1" dominant-baseline="central">178</text>
<text x="76" y="129.48" font-size="4.4" fill="#f8dce2" text-anchor="middle" font-family="Liberation Sans" font-weight="bold" letter-spacing="0.1" dominant-baseline="central">69</text>
<text x="84.92" y="129.48" font-size="4.4" fill="#f8dce2" text-anchor="middle" font-family="Liberation Sans" font-weight="bold" letter-spacing="0.1" dominant-baseline="central">150</text>
<text x="93.84" y="129.48" font-size="4.4" fill="#f8dce2" text-anchor="middle" font-family="Liberation Sans" font-weight="bold" letter-spacing="0.1" dominant-baseline="central">178</text>
<text x="102.76" y="129.48" font-size="4.4" fill="#f8dce2" text-anchor="middle" font-family="Liberation Sans" font-weight="bold" letter-spacing="0.1" dominant-baseline="central">147</text>
<text x="111.68" y="129.48" font-size="4.4" fill="#f8dce2" text-anchor="middle" font-family="Liberation Sans" font-weight="bold" letter-spacing="0.1" dominant-baseline="central">158</text>
<text x="120.6" y="129.48" font-size="4.4" fill="#f8dce2" text-anchor="middle" font-family="Liberation Sans" font-weight="bold" letter-spacing="0.1" dominant-baseline="central">177</text>
<text x="129.52" y="129.48" font-size="4.4" fill="#f8dce2" text-anchor="middle" font-family="Liberation Sans" font-weight="bold" letter-spacing="0.1" dominant-baseline="central">178</text>
<text x="138.44" y="129.48" font-size="4.4" fill="#f8dce2" text-anchor="middle" font-family="Liberation Sans" font-weight="bold" letter-spacing="0.1" dominant-baseline="central">64</text>
<text x="147.36" y="129.48" font-size="4.4" fill="#f8dce2" text-anchor="middle" font-family="Liberation Sans" font-weight="bold" letter-spacing="0.1" dominant-baseline="central">158</text>
<text x="156.28" y="129.48" font-size="4.4" fill="#f8dce2" text-anchor="middle" font-family="Liberation Sans" font-weight="bold" letter-spacing="0.1" dominant-baseline="central">177</text>
<text x="165.2" y="129.48" font-size="4.4" fill="#f8dce2" text-anchor="middle" font-family="Liberation Sans" font-weight="bold" letter-spacing="0.1" dominant-baseline="central">178</text>
<text x="174.12" y="129.48" font-size="4.4" fill="#f8dce2" text-anchor="middle" font-family="Liberation Sans" font-weight="bold" letter-spacing="0.1" dominant-baseline="central">66</text>
<text x="183.04" y="129.48" font-size="4.4" fill="#f8dce2" text-anchor="middle" font-family="Liberation Sans" font-weight="bold" letter-spacing="0.1" dominant-baseline="central">158</text>
<text x="191.96" y="129.48" font-size="4.4" fill="#f8dce2" text-anchor="middle" font-family="Liberation Sans" font-weight="bold" letter-spacing="0.1" dominant-baseline="central">177</text>
<text x="200.88" y="129.48" font-size="4.4" fill="#f8dce2" text-anchor="middle" font-family="Liberation Sans" font-weight="bold" letter-spacing="0.1" dominant-baseline="central">136</text>
<text x="209.8" y="129.48" font-size="4.4" fill="#f8dce2" text-anchor="middle" font-family="Liberation Sans" font-weight="bold" letter-spacing="0.1" dominant-baseline="central">134</text>
<text x="76" y="134.64" font-size="4.4" fill="#f8dce2" text-anchor="middle" font-family="Liberation Sans" font-weight="bold" letter-spacing="0.1" dominant-baseline="central">176</text>
<text x="84.92" y="134.64" font-size="4.4" fill="#f8dce2" text-anchor="middle" font-family="Liberation Sans" font-weight="bold" letter-spacing="0.1" dominant-baseline="central">133</text>
<text x="93.84" y="134.64" font-size="4.4" fill="#f8dce2" text-anchor="middle" font-family="Liberation Sans" font-weight="bold" letter-spacing="0.1" dominant-baseline="central">174</text>
<text x="102.76" y="134.64" font-size="4.4" fill="#f8dce2" text-anchor="middle" font-family="Liberation Sans" font-weight="bold" letter-spacing="0.1" dominant-baseline="central">180</text>
<text x="111.68" y="134.64" font-size="4.4" fill="#f8dce2" text-anchor="middle" font-family="Liberation Sans" font-weight="bold" letter-spacing="0.1" dominant-baseline="central">165</text>
<text x="120.6" y="134.64" font-size="4.4" fill="#f8dce2" text-anchor="middle" font-family="Liberation Sans" font-weight="bold" letter-spacing="0.1" dominant-baseline="central">174</text>
<text x="129.52" y="134.64" font-size="4.4" fill="#f8dce2" text-anchor="middle" font-family="Liberation Sans" font-weight="bold" letter-spacing="0.1" dominant-baseline="central">181</text>
<text x="138.44" y="134.64" font-size="4.4" fill="#f8dce2" text-anchor="middle" font-family="Liberation Sans" font-weight="bold" letter-spacing="0.1" dominant-baseline="central">168</text>
<text x="147.36" y="134.64" font-size="4.4" fill="#f8dce2" text-anchor="middle" font-family="Liberation Sans" font-weight="bold" letter-spacing="0.1" dominant-baseline="central">134</text>
<text x="156.28" y="134.64" font-size="4.4" fill="#f8dce2" text-anchor="middle" font-family="Liberation Sans" font-weight="bold" letter-spacing="0.1" dominant-baseline="central">177</text>
<text x="165.2" y="134.64" font-size="4.4" fill="#f8dce2" text-anchor="middle" font-family="Liberation Sans" font-weight="bold" letter-spacing="0.1" dominant-baseline="central">178</text>
<text x="174.12" y="134.64" font-size="4.4" fill="#f8dce2" text-anchor="middle" font-family="Liberation Sans" font-weight="bold" letter-spacing="0.1" dominant-baseline="central">65</text>
<text x="183.04" y="134.64" font-size="4.4" fill="#f8dce2" text-anchor="middle" font-family="Liberation Sans" font-weight="bold" letter-spacing="0.1" dominant-baseline="central">158</text>
<text x="191.96" y="134.64" font-size="4.4" fill="#f8dce2" text-anchor="middle" font-family="Liberation Sans" font-weight="bold" letter-spacing="0.1" dominant-baseline="central">177</text>
<text x="200.88" y="134.64" font-size="4.4" fill="#f8dce2" text-anchor="middle" font-family="Liberation Sans" font-weight="bold" letter-spacing="0.1" dominant-baseline="central">140</text>
<text x="209.8" y="134.64" font-size="4.4" fill="#f8dce2" text-anchor="middle" font-family="Liberation Sans" font-weight="bold" letter-spacing="0.1" dominant-baseline="central">166</text>
<text x="76" y="139.8" font-size="4.4" fill="#f8dce2" text-anchor="middle" font-family="Liberation Sans" font-weight="bold" letter-spacing="0.1" dominant-baseline="central">176</text>
<text x="84.92" y="139.8" font-size="4.4" fill="#f8dce2" text-anchor="middle" font-family="Liberation Sans" font-weight="bold" letter-spacing="0.1" dominant-baseline="central">131</text>
<text x="93.84" y="139.8" font-size="4.4" fill="#f8dce2" text-anchor="middle" font-family="Liberation Sans" font-weight="bold" letter-spacing="0.1" dominant-baseline="central">150</text>
<text x="102.76" y="139.8" font-size="4.4" fill="#f8dce2" text-anchor="middle" font-family="Liberation Sans" font-weight="bold" letter-spacing="0.1" dominant-baseline="central">177</text>
<text x="111.68" y="139.8" font-size="4.4" fill="#f8dce2" text-anchor="middle" font-family="Liberation Sans" font-weight="bold" letter-spacing="0.1" dominant-baseline="central">178</text>
<text x="120.6" y="139.8" font-size="4.4" fill="#f8dce2" text-anchor="middle" font-family="Liberation Sans" font-weight="bold" letter-spacing="0.1" dominant-baseline="central">67</text>
<text x="129.52" y="139.8" font-size="4.4" fill="#f8dce2" text-anchor="middle" font-family="Liberation Sans" font-weight="bold" letter-spacing="0.1" dominant-baseline="central">158</text>
<text x="138.44" y="139.8" font-size="4.4" fill="#f8dce2" text-anchor="middle" font-family="Liberation Sans" font-weight="bold" letter-spacing="0.1" dominant-baseline="central">177</text>
<text x="147.36" y="139.8" font-size="4.4" fill="#f8dce2" text-anchor="middle" font-family="Liberation Sans" font-weight="bold" letter-spacing="0.1" dominant-baseline="central">140</text>
<text x="156.28" y="139.8" font-size="4.4" fill="#f8dce2" text-anchor="middle" font-family="Liberation Sans" font-weight="bold" letter-spacing="0.1" dominant-baseline="central">165</text>
<text x="165.2" y="139.8" font-size="4.4" fill="#f8dce2" text-anchor="middle" font-family="Liberation Sans" font-weight="bold" letter-spacing="0.1" dominant-baseline="central">179</text>
<text x="174.12" y="139.8" font-size="4.4" fill="#f8dce2" text-anchor="middle" font-family="Liberation Sans" font-weight="bold" letter-spacing="0.1" dominant-baseline="central">157</text>
<text x="183.04" y="139.8" font-size="4.4" fill="#f8dce2" text-anchor="middle" font-family="Liberation Sans" font-weight="bold" letter-spacing="0.1" dominant-baseline="central">174</text>
<text x="191.96" y="139.8" font-size="4.4" fill="#f8dce2" text-anchor="middle" font-family="Liberation Sans" font-weight="bold" letter-spacing="0.1" dominant-baseline="central">177</text>
<text x="200.88" y="139.8" font-size="4.4" fill="#f8dce2" text-anchor="middle" font-family="Liberation Sans" font-weight="bold" letter-spacing="0.1" dominant-baseline="central">178</text>
<text x="209.8" y="139.8" font-size="4.4" fill="#f8dce2" text-anchor="middle" font-family="Liberation Sans" font-weight="bold" letter-spacing="0.1" dominant-baseline="central">69</text></g>
<path d="M34.5 51 Q41 56 44 65 L33.5 68 L30.5 64.5 L33 58 Z" fill="#1c64b4"/>
<rect x="31.5" y="53" width="2.6" height="2.8" fill="#e4902e"/>
<path d="M31 58.8 L35 58.8 L32 63 Z" fill="#e4902e"/>
<circle cx="38" cy="61" r="2" fill="none" stroke="#e8f0fa" stroke-width="0.9"/>

<circle cx="45" cy="60.6" r="2.3" fill="#2c8a3c" stroke="#b9bb32" stroke-width="1.3"/><circle cx="68.2" cy="60.6" r="2.3" fill="#2c8a3c" stroke="#b9bb32" stroke-width="1.3"/>
<path d="M44.5 60.6 L68 60.6" stroke="#b9bb32" stroke-width="3.6" fill="none"/>
<path d="M234 158.3 L234 359.55" stroke="#8a8d90" stroke-width="2.0" fill="none" stroke-linejoin="round" stroke-linecap="round"/>
<path d="M326 187.05 L584.75 187.05" stroke="#3d9edd" stroke-width="3.0" fill="none" stroke-linejoin="round" stroke-linecap="round"/>
<path d="M584.75 158.3 L584.75 474.55" stroke="#3d9edd" stroke-width="3.0" fill="none" stroke-linejoin="round" stroke-linecap="round"/>
<path d="M584.75 158.3 L653.75 158.3" stroke="#3d9edd" stroke-width="3.0" fill="none" stroke-linejoin="round" stroke-linecap="round"/>
<path d="M584.75 215.8 L653.75 215.8" stroke="#3d9edd" stroke-width="3.0" fill="none" stroke-linejoin="round" stroke-linecap="round"/>
<path d="M584.75 273.3 L653.75 273.3" stroke="#3d9edd" stroke-width="3.0" fill="none" stroke-linejoin="round" stroke-linecap="round"/>
<path d="M584.75 330.8 L653.75 330.8" stroke="#3d9edd" stroke-width="3.0" fill="none" stroke-linejoin="round" stroke-linecap="round"/>
<path d="M584.75 388.3 L653.75 388.3" stroke="#3d9edd" stroke-width="3.0" fill="none" stroke-linejoin="round" stroke-linecap="round"/>
<path d="M584.75 445.8 L653.75 445.8" stroke="#3d9edd" stroke-width="3.0" fill="none" stroke-linejoin="round" stroke-linecap="round"/>
<path d="M533 474.55 L780.25 474.55" stroke="#3d9edd" stroke-width="3.0" fill="none" stroke-linejoin="round" stroke-linecap="round"/>
<path d="M665.25 152.55 L671 152.55 L671 474.55" stroke="#3d9edd" stroke-width="3.0" fill="none" stroke-linejoin="round" stroke-linecap="round"/>
<path d="M665.25 210.05 L671 210.05" stroke="#3d9edd" stroke-width="3.0" fill="none" stroke-linejoin="round" stroke-linecap="round"/>
<path d="M665.25 267.55 L671 267.55" stroke="#3d9edd" stroke-width="3.0" fill="none" stroke-linejoin="round" stroke-linecap="round"/>
<path d="M665.25 325.05 L671 325.05" stroke="#3d9edd" stroke-width="3.0" fill="none" stroke-linejoin="round" stroke-linecap="round"/>
<path d="M665.25 382.55 L671 382.55" stroke="#3d9edd" stroke-width="3.0" fill="none" stroke-linejoin="round" stroke-linecap="round"/>
<path d="M665.25 440.05 L671 440.05" stroke="#3d9edd" stroke-width="3.0" fill="none" stroke-linejoin="round" stroke-linecap="round"/>
<path d="M642.25 37.55 L711.25 37.55 L711.25 204.3 L717 210.05 L728.5 210.05" stroke="#3d9edd" stroke-width="3.0" fill="none" stroke-linejoin="round" stroke-linecap="round"/>
<path d="M763 215.8 L780.25 215.8 L780.25 474.55" stroke="#3d9edd" stroke-width="3.0" fill="none" stroke-linejoin="round" stroke-linecap="round"/>
<path d="M745.75 215.8 L751.5 215.8" stroke="#ee6a34" stroke-width="3.2" fill="none" stroke-linejoin="round" stroke-linecap="round"/>
<path d="M268.5 43.3 L268.5 20.3 L630.75 20.3" stroke="#eea33c" stroke-width="3.0" fill="none" stroke-linejoin="round" stroke-linecap="round"/>
<path d="M274.25 49.05 L274.25 26.05 L630.75 26.05" stroke="#eea33c" stroke-width="3.0" fill="none" stroke-linejoin="round" stroke-linecap="round"/>
<path d="M280 54.8 L280 31.8 L630.75 31.8" stroke="#eea33c" stroke-width="3.0" fill="none" stroke-linejoin="round" stroke-linecap="round"/>
<path d="M234 60.55 L285.75 60.55 L314.5 89.3" stroke="#eea33c" stroke-width="3.0" fill="none" stroke-linejoin="round" stroke-linecap="round"/>
<path d="M234 66.3 L285.75 66.3 L314.5 95.05" stroke="#eea33c" stroke-width="3.0" fill="none" stroke-linejoin="round" stroke-linecap="round"/>
<path d="M234 72.05 L285.75 72.05 L314.5 100.8" stroke="#eea33c" stroke-width="3.0" fill="none" stroke-linejoin="round" stroke-linecap="round"/>
<path d="M291.5 66.3 L291.5 187.05 L314.5 187.05" stroke="#eea33c" stroke-width="3.0" fill="none" stroke-linejoin="round" stroke-linecap="round"/>
<path d="M285.75 66.3 L285.75 192.8 L314.5 192.8" stroke="#eea33c" stroke-width="3.0" fill="none" stroke-linejoin="round" stroke-linecap="round"/>
<path d="M280 72.05 L280 198.55 L314.5 198.55" stroke="#eea33c" stroke-width="3.0" fill="none" stroke-linejoin="round" stroke-linecap="round"/>
<path d="M234 77.8 L251.25 95.05 L251.25 146.8" stroke="#eea33c" stroke-width="3.0" fill="none" stroke-linejoin="round" stroke-linecap="round"/>
<path d="M234 83.55 L245.5 95.05 L245.5 146.8" stroke="#eea33c" stroke-width="3.0" fill="none" stroke-linejoin="round" stroke-linecap="round"/>
<path d="M216.75 60.55 L222.5 60.55" stroke="#e4e23a" stroke-width="3.0" fill="none" stroke-linejoin="round" stroke-linecap="round"/>
<path d="M262.75 37.55 L320.25 37.55" stroke="#e4e23a" stroke-width="3.0" fill="none" stroke-linejoin="round" stroke-linecap="round"/>
<path d="M262.75 37.55 L262.75 131.28" stroke="#e4e23a" stroke-width="3.0" fill="none" stroke-linejoin="round" stroke-linecap="round"/>
<path d="M262.75 140.47 L262.75 169.8 L239.75 169.8 L239.75 158.3" stroke="#e4e23a" stroke-width="3.0" fill="none" stroke-linejoin="round" stroke-linecap="round"/>
<path d="M262.75 77.8 L314.5 77.8 L320.25 83.55" stroke="#e4e23a" stroke-width="3.0" fill="none" stroke-linejoin="round" stroke-linecap="round"/>
<path d="M245.5 158.3 L245.5 164.05 L751.5 164.05 L757.25 169.8 L757.25 210.05" stroke="#e4e23a" stroke-width="3.0" fill="none" stroke-linejoin="round" stroke-linecap="round"/>
<path d="M579 164.05 L579 325.05" stroke="#e4e23a" stroke-width="3.0" fill="none" stroke-linejoin="round" stroke-linecap="round"/>
<path d="M579 313.55 L607.75 313.55" stroke="#e4e23a" stroke-width="3.0" fill="none" stroke-linejoin="round" stroke-linecap="round"/>
<path d="M579 325.05 L607.75 325.05" stroke="#e4e23a" stroke-width="3.0" fill="none" stroke-linejoin="round" stroke-linecap="round"/>
<path d="M234 43.3 L314.5 43.3" stroke="#42e08e" stroke-width="3.0" fill="none" stroke-linejoin="round" stroke-linecap="round"/>
<path d="M234 49.05 L314.5 49.05" stroke="#42e08e" stroke-width="3.0" fill="none" stroke-linejoin="round" stroke-linecap="round"/>
<path d="M234 54.8 L314.5 54.8" stroke="#42e08e" stroke-width="3.0" fill="none" stroke-linejoin="round" stroke-linecap="round"/>
<path d="M308.75 43.3 L308.75 169.8 L314.5 169.8" stroke="#42e08e" stroke-width="3.0" fill="none" stroke-linejoin="round" stroke-linecap="round"/>
<path d="M303 49.05 L303 175.55 L314.5 175.55" stroke="#42e08e" stroke-width="3.0" fill="none" stroke-linejoin="round" stroke-linecap="round"/>
<path d="M297.25 54.8 L297.25 181.3 L314.5 181.3" stroke="#42e08e" stroke-width="3.0" fill="none" stroke-linejoin="round" stroke-linecap="round"/>
<path d="M251.25 158.3 L561.75 158.3 L573.25 158.3" stroke="#42e08e" stroke-width="3.0" fill="none" stroke-linejoin="round" stroke-linecap="round"/>
<path d="M343.25 158.3 L343.25 181.3" stroke="#42e08e" stroke-width="3.0" fill="none" stroke-linejoin="round" stroke-linecap="round"/>
<path d="M561.75 146.8 L561.75 158.3" stroke="#42e08e" stroke-width="3.0" fill="none" stroke-linejoin="round" stroke-linecap="round"/>
<path d="M561.75 146.8 L573.25 146.8" stroke="#42e08e" stroke-width="3.0" fill="none" stroke-linejoin="round" stroke-linecap="round"/>
<path d="M326 43.3 L567.5 43.3 L567.5 152.55 L573.25 152.55" stroke="#42e08e" stroke-width="3.0" fill="none" stroke-linejoin="round" stroke-linecap="round"/>
<path d="M326 49.05 L607.75 49.05 L613.5 54.8 L613.5 210.05 L653.75 210.05" stroke="#42e08e" stroke-width="3.0" fill="none" stroke-linejoin="round" stroke-linecap="round"/>
<path d="M326 54.8 L602 54.8 L607.75 60.55 L607.75 267.55 L653.75 267.55" stroke="#42e08e" stroke-width="3.0" fill="none" stroke-linejoin="round" stroke-linecap="round"/>
<path d="M326 60.55 L596.25 60.55 L602 66.3 L602 319.3 L607.75 319.3" stroke="#42e08e" stroke-width="3.0" fill="none" stroke-linejoin="round" stroke-linecap="round"/>
<path d="M326 66.3 L590.5 66.3 L596.25 72.05 L596.25 382.55 L653.75 382.55" stroke="#42e08e" stroke-width="3.0" fill="none" stroke-linejoin="round" stroke-linecap="round"/>
<path d="M326 72.05 L584.75 72.05 L590.5 77.8 L590.5 440.05 L653.75 440.05" stroke="#42e08e" stroke-width="3.0" fill="none" stroke-linejoin="round" stroke-linecap="round"/>
<path d="M326 77.8 L550.25 77.8 L556 83.55 L556 474.55 L567.5 486.05 L780.25 486.05 L786 480.3" stroke="#42e08e" stroke-width="3.0" fill="none" stroke-linejoin="round" stroke-linecap="round"/>
<path d="M584.75 152.55 L653.75 152.55" stroke="#42e08e" stroke-width="3.0" fill="none" stroke-linejoin="round" stroke-linecap="round"/>
<path d="M619.25 319.3 L625 325.05 L653.75 325.05" stroke="#42e08e" stroke-width="3.0" fill="none" stroke-linejoin="round" stroke-linecap="round"/>
<path d="M665.25 215.8 L728.5 215.8" stroke="#42e08e" stroke-width="3.0" fill="none" stroke-linejoin="round" stroke-linecap="round"/>
<path d="M665.25 273.3 L682.5 273.3 L682.5 221.55 L728.5 221.55" stroke="#42e08e" stroke-width="3.0" fill="none" stroke-linejoin="round" stroke-linecap="round"/>
<path d="M326 89.3 L648 89.3 L653.75 95.05 L653.75 146.8" stroke="#e146d3" stroke-width="3.0" fill="none" stroke-linejoin="round" stroke-linecap="round"/>
<path d="M326 95.05 L642.25 95.05 L648 100.8 L648 204.3 L653.75 204.3" stroke="#e146d3" stroke-width="3.0" fill="none" stroke-linejoin="round" stroke-linecap="round"/>
<path d="M326 100.8 L636.5 100.8 L642.25 106.55 L642.25 261.8 L653.75 261.8" stroke="#e146d3" stroke-width="3.0" fill="none" stroke-linejoin="round" stroke-linecap="round"/>
<path d="M326 106.55 L630.75 106.55 L636.5 112.3 L636.5 319.3 L653.75 319.3" stroke="#e146d3" stroke-width="3.0" fill="none" stroke-linejoin="round" stroke-linecap="round"/>
<path d="M326 112.3 L625 112.3 L630.75 118.05 L630.75 376.8 L653.75 376.8" stroke="#e146d3" stroke-width="3.0" fill="none" stroke-linejoin="round" stroke-linecap="round"/>
<path d="M326 118.05 L619.25 118.05 L625 123.8 L625 434.3 L653.75 434.3" stroke="#e146d3" stroke-width="3.0" fill="none" stroke-linejoin="round" stroke-linecap="round"/>
<path d="M326 123.8 L521.5 123.8 L527.25 129.55 L527.25 468.8" stroke="#e146d3" stroke-width="3.0" fill="none" stroke-linejoin="round" stroke-linecap="round"/>
<rect x="300.35" y="18.8" width="4.5" height="3.0" rx="1.3" fill="#24993a"/>
<rect x="340.6" y="18.8" width="4.5" height="3.0" rx="1.3" fill="#24993a"/>
<rect x="380.85" y="18.8" width="4.5" height="3.0" rx="1.3" fill="#24993a"/>
<rect x="421.1" y="18.8" width="4.5" height="3.0" rx="1.3" fill="#24993a"/>
<rect x="461.35" y="18.8" width="4.5" height="3.0" rx="1.3" fill="#24993a"/>
<rect x="501.6" y="18.8" width="4.5" height="3.0" rx="1.3" fill="#24993a"/>
<rect x="541.85" y="18.8" width="4.5" height="3.0" rx="1.3" fill="#24993a"/>
<rect x="582.1" y="18.8" width="4.5" height="3.0" rx="1.3" fill="#24993a"/>
<rect x="622.35" y="18.8" width="4.5" height="3.0" rx="1.3" fill="#24993a"/>
<rect x="287.75" y="30.3" width="4.5" height="3.0" rx="1.3" fill="#24993a"/>
<rect x="326.75" y="30.3" width="4.5" height="3.0" rx="1.3" fill="#24993a"/>
<rect x="365.75" y="30.3" width="4.5" height="3.0" rx="1.3" fill="#24993a"/>
<rect x="404.75" y="30.3" width="4.5" height="3.0" rx="1.3" fill="#24993a"/>
<rect x="443.75" y="30.3" width="4.5" height="3.0" rx="1.3" fill="#24993a"/>
<rect x="482.75" y="30.3" width="4.5" height="3.0" rx="1.3" fill="#24993a"/>
<rect x="521.75" y="30.3" width="4.5" height="3.0" rx="1.3" fill="#24993a"/>
<rect x="560.75" y="30.3" width="4.5" height="3.0" rx="1.3" fill="#24993a"/>
<rect x="599.75" y="30.3" width="4.5" height="3.0" rx="1.3" fill="#24993a"/>
<rect x="280.75" y="162.55" width="4.5" height="3.0" rx="1.3" fill="#24993a"/>
<rect x="322.45" y="162.55" width="4.5" height="3.0" rx="1.3" fill="#24993a"/>
<rect x="363.75" y="162.55" width="4.5" height="3.0" rx="1.3" fill="#24993a"/>
<rect x="405.75" y="162.55" width="4.5" height="3.0" rx="1.3" fill="#24993a"/>
<rect x="447.75" y="162.55" width="4.5" height="3.0" rx="1.3" fill="#24993a"/>
<rect x="489.75" y="162.55" width="4.5" height="3.0" rx="1.3" fill="#24993a"/>
<rect x="531.55" y="162.55" width="4.5" height="3.0" rx="1.3" fill="#24993a"/>
<rect x="572.25" y="162.55" width="4.5" height="3.0" rx="1.3" fill="#24993a"/>
<rect x="613.75" y="162.55" width="4.5" height="3.0" rx="1.3" fill="#24993a"/>
<rect x="657.75" y="162.55" width="4.5" height="3.0" rx="1.3" fill="#24993a"/>
<rect x="702.75" y="162.55" width="4.5" height="3.0" rx="1.3" fill="#24993a"/>
<rect x="748.25" y="162.55" width="4.5" height="3.0" rx="1.3" fill="#24993a"/>
<rect x="247.75" y="41.8" width="4.5" height="3.0" rx="1.3" fill="#24993a"/>
<rect x="257.75" y="53.3" width="4.5" height="3.0" rx="1.3" fill="#24993a"/>
<rect x="301.25" y="41.8" width="4.5" height="3.0" rx="1.3" fill="#24993a"/>
<rect x="309.75" y="53.3" width="4.5" height="3.0" rx="1.3" fill="#24993a"/>
<rect x="267" y="27.75" width="3.0" height="4.5" ry="1.3" fill="#24993a"/>
<rect x="278.5" y="37.75" width="3.0" height="4.5" ry="1.3" fill="#24993a"/>
<rect x="261.25" y="98.35" width="3.0" height="4.5" ry="1.3" fill="#24993a"/>
<rect x="249.75" y="131.45" width="3.0" height="4.5" ry="1.3" fill="#24993a"/>
<rect x="755.75" y="181.75" width="3.0" height="4.5" ry="1.3" fill="#24993a"/>
<rect x="577.5" y="195" width="3.0" height="4.5" ry="1.3" fill="#24993a"/>
<rect x="577.5" y="232.5" width="3.0" height="4.5" ry="1.3" fill="#24993a"/>
<rect x="577.5" y="270" width="3.0" height="4.5" ry="1.3" fill="#24993a"/>
<rect x="577.5" y="306.15" width="3.0" height="4.5" ry="1.3" fill="#24993a"/>
<rect x="577.5" y="316.25" width="3.0" height="4.5" ry="1.3" fill="#24993a"/>
<rect x="295.75" y="95.45" width="3.0" height="4.5" ry="1.3" fill="#24993a"/>
<rect x="295.75" y="137.25" width="3.0" height="4.5" ry="1.3" fill="#24993a"/>
<rect x="307.25" y="84.25" width="3.0" height="4.5" ry="1.3" fill="#24993a"/>
<rect x="307.25" y="126.05" width="3.0" height="4.5" ry="1.3" fill="#24993a"/>
<rect x="638.5" y="323.55" width="4.5" height="3.0" rx="1.3" fill="#24993a"/>
<rect x="591.75" y="323.55" width="4.5" height="3.0" rx="1.3" fill="#24993a"/>
<rect x="288.25" y="76.3" width="4.5" height="3.0" rx="1.3" fill="#24993a"/>
<circle cx="268.5" cy="20.3" r="2.3" fill="#354b63" stroke="#eea33c" stroke-width="1.3"/>
<circle cx="274.25" cy="26.05" r="2.3" fill="#354b63" stroke="#eea33c" stroke-width="1.3"/>
<circle cx="280" cy="31.8" r="2.3" fill="#354b63" stroke="#eea33c" stroke-width="1.3"/>
<circle cx="268.5" cy="43.3" r="2.3" fill="#354b63" stroke="#42e08e" stroke-width="1.3"/>
<circle cx="274.25" cy="49.05" r="2.3" fill="#354b63" stroke="#42e08e" stroke-width="1.3"/>
<circle cx="280" cy="54.8" r="2.3" fill="#354b63" stroke="#42e08e" stroke-width="1.3"/>
<circle cx="262.75" cy="37.55" r="2.3" fill="#354b63" stroke="#e4e23a" stroke-width="1.3"/>
<circle cx="262.75" cy="77.8" r="2.3" fill="#354b63" stroke="#e4e23a" stroke-width="1.3"/>
<circle cx="314.5" cy="77.8" r="2.3" fill="#354b63" stroke="#e4e23a" stroke-width="1.3"/>
<circle cx="308.75" cy="43.3" r="2.3" fill="#354b63" stroke="#42e08e" stroke-width="1.3"/>
<circle cx="303" cy="49.05" r="2.3" fill="#354b63" stroke="#42e08e" stroke-width="1.3"/>
<circle cx="297.25" cy="54.8" r="2.3" fill="#354b63" stroke="#42e08e" stroke-width="1.3"/>
<circle cx="285.75" cy="66.3" r="2.3" fill="#354b63" stroke="#eea33c" stroke-width="1.3"/>
<circle cx="291.5" cy="66.3" r="2.3" fill="#354b63" stroke="#eea33c" stroke-width="1.3"/>
<circle cx="280" cy="72.05" r="2.3" fill="#354b63" stroke="#eea33c" stroke-width="1.3"/>
<circle cx="251.25" cy="95.05" r="2.3" fill="#354b63" stroke="#eea33c" stroke-width="1.3"/>
<circle cx="245.5" cy="95.05" r="2.3" fill="#354b63" stroke="#eea33c" stroke-width="1.3"/>
<circle cx="239.75" cy="169.8" r="2.3" fill="#354b63" stroke="#e4e23a" stroke-width="1.3"/>
<circle cx="262.75" cy="169.8" r="2.3" fill="#354b63" stroke="#e4e23a" stroke-width="1.3"/>
<circle cx="245.5" cy="164.05" r="2.3" fill="#354b63" stroke="#e4e23a" stroke-width="1.3"/>
<circle cx="234" cy="359.55" r="2.3" fill="#354b63" stroke="#8a8d90" stroke-width="1.2"/>
<circle cx="343.25" cy="158.3" r="2.3" fill="#354b63" stroke="#42e08e" stroke-width="1.3"/>
<circle cx="567.5" cy="43.3" r="2.3" fill="#354b63" stroke="#42e08e" stroke-width="1.3"/>
<circle cx="607.75" cy="49.05" r="2.3" fill="#354b63" stroke="#42e08e" stroke-width="1.3"/>
<circle cx="613.5" cy="54.8" r="2.3" fill="#354b63" stroke="#42e08e" stroke-width="1.3"/>
<circle cx="602" cy="54.8" r="2.3" fill="#354b63" stroke="#42e08e" stroke-width="1.3"/>
<circle cx="607.75" cy="60.55" r="2.3" fill="#354b63" stroke="#42e08e" stroke-width="1.3"/>
<circle cx="596.25" cy="60.55" r="2.3" fill="#354b63" stroke="#42e08e" stroke-width="1.3"/>
<circle cx="602" cy="66.3" r="2.3" fill="#354b63" stroke="#42e08e" stroke-width="1.3"/>
<circle cx="590.5" cy="66.3" r="2.3" fill="#354b63" stroke="#42e08e" stroke-width="1.3"/>
<circle cx="596.25" cy="72.05" r="2.3" fill="#354b63" stroke="#42e08e" stroke-width="1.3"/>
<circle cx="584.75" cy="72.05" r="2.3" fill="#354b63" stroke="#42e08e" stroke-width="1.3"/>
<circle cx="590.5" cy="77.8" r="2.3" fill="#354b63" stroke="#42e08e" stroke-width="1.3"/>
<circle cx="556" cy="83.55" r="2.3" fill="#354b63" stroke="#42e08e" stroke-width="1.3"/>
<circle cx="648" cy="89.3" r="2.3" fill="#354b63" stroke="#e146d3" stroke-width="1.3"/>
<circle cx="642.25" cy="95.05" r="2.3" fill="#354b63" stroke="#e146d3" stroke-width="1.3"/>
<circle cx="648" cy="100.8" r="2.3" fill="#354b63" stroke="#e146d3" stroke-width="1.3"/>
<circle cx="636.5" cy="100.8" r="2.3" fill="#354b63" stroke="#e146d3" stroke-width="1.3"/>
<circle cx="642.25" cy="106.55" r="2.3" fill="#354b63" stroke="#e146d3" stroke-width="1.3"/>
<circle cx="630.75" cy="106.55" r="2.3" fill="#354b63" stroke="#e146d3" stroke-width="1.3"/>
<circle cx="636.5" cy="112.3" r="2.3" fill="#354b63" stroke="#e146d3" stroke-width="1.3"/>
<circle cx="625" cy="112.3" r="2.3" fill="#354b63" stroke="#e146d3" stroke-width="1.3"/>
<circle cx="630.75" cy="118.05" r="2.3" fill="#354b63" stroke="#e146d3" stroke-width="1.3"/>
<circle cx="625" cy="123.8" r="2.3" fill="#354b63" stroke="#e146d3" stroke-width="1.3"/>
<circle cx="521.5" cy="123.8" r="2.3" fill="#354b63" stroke="#e146d3" stroke-width="1.3"/>
<circle cx="561.75" cy="146.8" r="2.3" fill="#354b63" stroke="#42e08e" stroke-width="1.3"/>
<circle cx="561.75" cy="158.3" r="2.3" fill="#354b63" stroke="#42e08e" stroke-width="1.3"/>
<circle cx="567.5" cy="152.55" r="2.3" fill="#354b63" stroke="#42e08e" stroke-width="1.3"/>
<circle cx="579" cy="164.05" r="2.3" fill="#354b63" stroke="#e4e23a" stroke-width="1.3"/>
<circle cx="579" cy="313.55" r="2.3" fill="#354b63" stroke="#e4e23a" stroke-width="1.3"/>
<circle cx="579" cy="325.05" r="2.3" fill="#354b63" stroke="#e4e23a" stroke-width="1.3"/>
<circle cx="602" cy="319.3" r="2.3" fill="#354b63" stroke="#42e08e" stroke-width="1.3"/>
<circle cx="584.75" cy="158.3" r="2.3" fill="#354b63" stroke="#3d9edd" stroke-width="1.3"/>
<circle cx="584.75" cy="187.05" r="2.3" fill="#354b63" stroke="#3d9edd" stroke-width="1.3"/>
<circle cx="584.75" cy="215.8" r="2.3" fill="#354b63" stroke="#3d9edd" stroke-width="1.3"/>
<circle cx="584.75" cy="273.3" r="2.3" fill="#354b63" stroke="#3d9edd" stroke-width="1.3"/>
<circle cx="584.75" cy="330.8" r="2.3" fill="#354b63" stroke="#3d9edd" stroke-width="1.3"/>
<circle cx="584.75" cy="388.3" r="2.3" fill="#354b63" stroke="#3d9edd" stroke-width="1.3"/>
<circle cx="584.75" cy="445.8" r="2.3" fill="#354b63" stroke="#3d9edd" stroke-width="1.3"/>
<circle cx="584.75" cy="474.55" r="2.3" fill="#354b63" stroke="#3d9edd" stroke-width="1.3"/>
<circle cx="671" cy="152.55" r="2.3" fill="#354b63" stroke="#3d9edd" stroke-width="1.3"/>
<circle cx="671" cy="210.05" r="2.3" fill="#354b63" stroke="#3d9edd" stroke-width="1.3"/>
<circle cx="671" cy="267.55" r="2.3" fill="#354b63" stroke="#3d9edd" stroke-width="1.3"/>
<circle cx="671" cy="325.05" r="2.3" fill="#354b63" stroke="#3d9edd" stroke-width="1.3"/>
<circle cx="671" cy="382.55" r="2.3" fill="#354b63" stroke="#3d9edd" stroke-width="1.3"/>
<circle cx="671" cy="440.05" r="2.3" fill="#354b63" stroke="#3d9edd" stroke-width="1.3"/>
<circle cx="671" cy="474.55" r="2.3" fill="#354b63" stroke="#3d9edd" stroke-width="1.3"/>
<circle cx="780.25" cy="474.55" r="2.3" fill="#354b63" stroke="#3d9edd" stroke-width="1.3"/>
<circle cx="780.25" cy="215.8" r="2.3" fill="#354b63" stroke="#3d9edd" stroke-width="1.3"/>
<circle cx="711.25" cy="37.55" r="2.3" fill="#354b63" stroke="#3d9edd" stroke-width="1.3"/>
<circle cx="717" cy="210.05" r="2.3" fill="#354b63" stroke="#3d9edd" stroke-width="1.3"/>
<circle cx="613.5" cy="210.05" r="2.3" fill="#354b63" stroke="#42e08e" stroke-width="1.3"/>
<circle cx="607.75" cy="267.55" r="2.3" fill="#354b63" stroke="#42e08e" stroke-width="1.3"/>
<circle cx="596.25" cy="382.55" r="2.3" fill="#354b63" stroke="#42e08e" stroke-width="1.3"/>
<circle cx="590.5" cy="440.05" r="2.3" fill="#354b63" stroke="#42e08e" stroke-width="1.3"/>
<circle cx="648" cy="204.3" r="2.3" fill="#354b63" stroke="#e146d3" stroke-width="1.3"/>
<circle cx="642.25" cy="261.8" r="2.3" fill="#354b63" stroke="#e146d3" stroke-width="1.3"/>
<circle cx="636.5" cy="319.3" r="2.3" fill="#354b63" stroke="#e146d3" stroke-width="1.3"/>
<circle cx="630.75" cy="376.8" r="2.3" fill="#354b63" stroke="#e146d3" stroke-width="1.3"/>
<circle cx="625" cy="434.3" r="2.3" fill="#354b63" stroke="#e146d3" stroke-width="1.3"/>
<circle cx="665.25" cy="215.8" r="2.3" fill="#354b63" stroke="#42e08e" stroke-width="1.3"/>
<circle cx="665.25" cy="273.3" r="2.3" fill="#354b63" stroke="#42e08e" stroke-width="1.3"/>
<circle cx="682.5" cy="273.3" r="2.3" fill="#354b63" stroke="#42e08e" stroke-width="1.3"/>
<circle cx="682.5" cy="221.55" r="2.3" fill="#354b63" stroke="#42e08e" stroke-width="1.3"/>
<circle cx="567.5" cy="486.05" r="2.3" fill="#354b63" stroke="#42e08e" stroke-width="1.3"/>
<circle cx="653.75" cy="95.05" r="2.3" fill="#354b63" stroke="#e146d3" stroke-width="1.3"/>
<circle cx="280" cy="198.55" r="2.3" fill="#354b63" stroke="#eea33c" stroke-width="1.3"/>
<circle cx="285.75" cy="192.8" r="2.3" fill="#354b63" stroke="#eea33c" stroke-width="1.3"/>
<circle cx="291.5" cy="187.05" r="2.3" fill="#354b63" stroke="#eea33c" stroke-width="1.3"/>
<circle cx="297.25" cy="181.3" r="2.3" fill="#354b63" stroke="#42e08e" stroke-width="1.3"/>
<circle cx="303" cy="175.55" r="2.3" fill="#354b63" stroke="#42e08e" stroke-width="1.3"/>
<circle cx="308.75" cy="169.8" r="2.3" fill="#354b63" stroke="#42e08e" stroke-width="1.3"/>
<circle cx="757.25" cy="169.8" r="2.3" fill="#354b63" stroke="#e4e23a" stroke-width="1.3"/>
<circle cx="584.75" cy="394.05" r="2.3" fill="#354b63" stroke="#3d9edd" stroke-width="1.3"/>
<circle cx="671" cy="296.3" r="2.3" fill="#354b63" stroke="#3d9edd" stroke-width="1.3"/>
<circle cx="671" cy="302.05" r="2.3" fill="#354b63" stroke="#3d9edd" stroke-width="1.3"/>
<circle cx="671" cy="428.55" r="2.3" fill="#354b63" stroke="#3d9edd" stroke-width="1.3"/>
<circle cx="780.25" cy="388.3" r="2.3" fill="#354b63" stroke="#3d9edd" stroke-width="1.3"/>
<circle cx="780.25" cy="457.3" r="2.3" fill="#354b63" stroke="#3d9edd" stroke-width="1.3"/>
<path d="M225 40 L233.5 40 L233.5 87.5 L222.5 87.5 L222.5 42.5 Q222.5 40 225 40 Z" fill="#1656a6"/>
<text x="230.2" y="43.5" font-size="5.0" fill="#dfe8f5" text-anchor="end" font-weight="normal" font-family="Liberation Sans" dominant-baseline="central" transform="translate(230.2 0) scale(0.8 1) translate(-230.2 0)">1</text>
<path d="M230.6 42.3 l1.8 1 l-1.8 1 z" fill="#ffffff"/>
<text x="230.2" y="49.25" font-size="5.0" fill="#dfe8f5" text-anchor="end" font-weight="normal" font-family="Liberation Sans" dominant-baseline="central" transform="translate(230.2 0) scale(0.8 1) translate(-230.2 0)">2</text>
<path d="M230.6 48.05 l1.8 1 l-1.8 1 z" fill="#ffffff"/>
<text x="230.2" y="55" font-size="5.0" fill="#dfe8f5" text-anchor="end" font-weight="normal" font-family="Liberation Sans" dominant-baseline="central" transform="translate(230.2 0) scale(0.8 1) translate(-230.2 0)">4</text>
<path d="M230.6 53.8 l1.8 1 l-1.8 1 z" fill="#ffffff"/>
<text x="230.2" y="60.75" font-size="5.0" fill="#dfe8f5" text-anchor="end" font-weight="normal" font-family="Liberation Sans" dominant-baseline="central" transform="translate(230.2 0) scale(0.8 1) translate(-230.2 0)">8</text>
<path d="M230.6 59.55 l1.8 1 l-1.8 1 z" fill="#ffffff"/>
<text x="230.2" y="66.5" font-size="5.0" fill="#dfe8f5" text-anchor="end" font-weight="normal" font-family="Liberation Sans" dominant-baseline="central" transform="translate(230.2 0) scale(0.8 1) translate(-230.2 0)">16</text>
<path d="M230.6 65.3 l1.8 1 l-1.8 1 z" fill="#ffffff"/>
<text x="230.2" y="72.25" font-size="5.0" fill="#dfe8f5" text-anchor="end" font-weight="normal" font-family="Liberation Sans" dominant-baseline="central" transform="translate(230.2 0) scale(0.8 1) translate(-230.2 0)">32</text>
<path d="M230.6 71.05 l1.8 1 l-1.8 1 z" fill="#ffffff"/>
<text x="230.2" y="78" font-size="5.0" fill="#dfe8f5" text-anchor="end" font-weight="normal" font-family="Liberation Sans" dominant-baseline="central" transform="translate(230.2 0) scale(0.8 1) translate(-230.2 0)">64</text>
<path d="M230.6 76.8 l1.8 1 l-1.8 1 z" fill="#ffffff"/>
<text x="230.2" y="83.75" font-size="5.0" fill="#dfe8f5" text-anchor="end" font-weight="normal" font-family="Liberation Sans" dominant-baseline="central" transform="translate(230.2 0) scale(0.8 1) translate(-230.2 0)">128</text>
<path d="M230.6 82.55 l1.8 1 l-1.8 1 z" fill="#ffffff"/>
<circle cx="234" cy="43.3" r="1.9" fill="#1e8a38" stroke="#42e08e" stroke-width="1.2"/>
<circle cx="234" cy="49.05" r="1.5" fill="#e44a5c"/>
<circle cx="234" cy="54.8" r="1.9" fill="#1e8a38" stroke="#42e08e" stroke-width="1.2"/>
<circle cx="234" cy="60.55" r="1.9" fill="#e44a5c" stroke="#eea33c" stroke-width="1.2"/>
<circle cx="234" cy="66.3" r="1.9" fill="#e44a5c" stroke="#eea33c" stroke-width="1.2"/>
<circle cx="234" cy="72.05" r="1.9" fill="#e44a5c" stroke="#eea33c" stroke-width="1.2"/>
<circle cx="234" cy="77.8" r="1.9" fill="#1e8a38" stroke="#eea33c" stroke-width="1.2"/>
<circle cx="234" cy="83.55" r="1.9" fill="#e44a5c" stroke="#eea33c" stroke-width="1.2"/>
<circle cx="216.75" cy="60.55" r="2.3" fill="#2c8a3c" stroke="#e4e23a" stroke-width="1.3"/>
<circle cx="222.5" cy="60.55" r="2.3" fill="#2c8a3c" stroke="#e4e23a" stroke-width="1.3"/>
<path d="M316.5 35 L323 35 L323 86 L320.8 87 L315.2 36.5 Q315.3 35 316.5 35 Z" fill="#1656a6"/>
<path d="M316.5 81 L323 81 L323 132 L320.8 133 L315.2 82.5 Q315.3 81 316.5 81 Z" fill="#1656a6"/>
<text x="319.6" y="52" font-size="5.6" fill="#e8f0fa" text-anchor="middle" font-weight="normal" font-family="Liberation Sans" dominant-baseline="central" transform="rotate(90 319.6 52)" font-weight="bold" letter-spacing="0.4">DEC</text>
<text x="319.6" y="98" font-size="5.6" fill="#e8f0fa" text-anchor="middle" font-weight="normal" font-family="Liberation Sans" dominant-baseline="central" transform="rotate(90 319.6 98)" font-weight="bold" letter-spacing="0.4">DEC</text>
<circle cx="320.25" cy="37.55" r="2.3" fill="#2c8a3c" stroke="#e4e23a" stroke-width="1.3"/>
<circle cx="320.25" cy="83.55" r="2.3" fill="#2c8a3c" stroke="#e4e23a" stroke-width="1.3"/>
<circle cx="314.5" cy="43.3" r="1.9" fill="#1e8a38" stroke="#42e08e" stroke-width="1.2"/>
<circle cx="314.5" cy="49.05" r="1.5" fill="#e44a5c"/>
<circle cx="314.5" cy="54.8" r="1.9" fill="#1e8a38" stroke="#42e08e" stroke-width="1.2"/>
<circle cx="314.5" cy="89.3" r="1.9" fill="#e86a8a" stroke="#eea33c" stroke-width="1.2"/>
<circle cx="314.5" cy="95.05" r="1.9" fill="#e86a8a" stroke="#eea33c" stroke-width="1.2"/>
<circle cx="314.5" cy="100.8" r="1.9" fill="#e86a8a" stroke="#eea33c" stroke-width="1.2"/>
<circle cx="326" cy="43.3" r="1.9" fill="#e44a5c" stroke="#42e08e" stroke-width="1.2"/>
<circle cx="326" cy="49.05" r="1.9" fill="#e44a5c" stroke="#42e08e" stroke-width="1.2"/>
<circle cx="326" cy="54.8" r="1.9" fill="#e44a5c" stroke="#42e08e" stroke-width="1.2"/>
<circle cx="326" cy="60.55" r="1.9" fill="#e44a5c" stroke="#42e08e" stroke-width="1.2"/>
<circle cx="326" cy="66.3" r="1.9" fill="#e44a5c" stroke="#42e08e" stroke-width="1.2"/>
<circle cx="326" cy="72.05" r="1.9" fill="#e44a5c" stroke="#42e08e" stroke-width="1.2"/>
<circle cx="326" cy="77.8" r="1.9" fill="#e44a5c" stroke="#42e08e" stroke-width="1.2"/>
<circle cx="326" cy="83.55" r="1.5" fill="#e44a5c"/>
<circle cx="326" cy="89.3" r="1.9" fill="#e44a5c" stroke="#e146d3" stroke-width="1.2"/>
<circle cx="326" cy="95.05" r="1.9" fill="#e44a5c" stroke="#e146d3" stroke-width="1.2"/>
<circle cx="326" cy="100.8" r="1.9" fill="#e44a5c" stroke="#e146d3" stroke-width="1.2"/>
<circle cx="326" cy="106.55" r="1.9" fill="#e44a5c" stroke="#e146d3" stroke-width="1.2"/>
<circle cx="326" cy="112.3" r="1.9" fill="#e44a5c" stroke="#e146d3" stroke-width="1.2"/>
<circle cx="326" cy="118.05" r="1.9" fill="#e44a5c" stroke="#e146d3" stroke-width="1.2"/>
<circle cx="326" cy="123.8" r="1.9" fill="#e44a5c" stroke="#e146d3" stroke-width="1.2"/>
<circle cx="326" cy="129.55" r="1.5" fill="#e44a5c"/>
<path d="M315.3 167 L324 167 Q326.5 167 326.5 169.5 L326.5 213.8 L315.3 213.8 Z" fill="#1656a6"/>
<text x="316.8" y="170" font-size="5.0" fill="#dfe8f5" text-anchor="start" font-weight="normal" font-family="Liberation Sans" dominant-baseline="central" transform="translate(316.8 0) scale(0.8 1) translate(-316.8 0)">1</text>
<text x="316.8" y="175.75" font-size="5.0" fill="#dfe8f5" text-anchor="start" font-weight="normal" font-family="Liberation Sans" dominant-baseline="central" transform="translate(316.8 0) scale(0.8 1) translate(-316.8 0)">2</text>
<text x="316.8" y="181.5" font-size="5.0" fill="#dfe8f5" text-anchor="start" font-weight="normal" font-family="Liberation Sans" dominant-baseline="central" transform="translate(316.8 0) scale(0.8 1) translate(-316.8 0)">4</text>
<text x="316.8" y="187.25" font-size="5.0" fill="#dfe8f5" text-anchor="start" font-weight="normal" font-family="Liberation Sans" dominant-baseline="central" transform="translate(316.8 0) scale(0.8 1) translate(-316.8 0)">8</text>
<text x="316.8" y="193" font-size="5.0" fill="#dfe8f5" text-anchor="start" font-weight="normal" font-family="Liberation Sans" dominant-baseline="central" transform="translate(316.8 0) scale(0.8 1) translate(-316.8 0)">16</text>
<text x="316.8" y="198.75" font-size="5.0" fill="#dfe8f5" text-anchor="start" font-weight="normal" font-family="Liberation Sans" dominant-baseline="central" transform="translate(316.8 0) scale(0.8 1) translate(-316.8 0)">32</text>
<text x="316.8" y="204.5" font-size="5.0" fill="#dfe8f5" text-anchor="start" font-weight="normal" font-family="Liberation Sans" dominant-baseline="central" transform="translate(316.8 0) scale(0.8 1) translate(-316.8 0)">64</text>
<text x="316.8" y="210.25" font-size="5.0" fill="#dfe8f5" text-anchor="start" font-weight="normal" font-family="Liberation Sans" dominant-baseline="central" transform="translate(316.8 0) scale(0.8 1) translate(-316.8 0)">128</text>
<path d="M321.3 184.75 l3.6 2.3 l-3.6 2.3 z" fill="#ffffff"/>
<circle cx="314.5" cy="169.8" r="1.9" fill="#2c8a3c" stroke="#42e08e" stroke-width="1.2"/>
<circle cx="314.5" cy="175.55" r="1.9" fill="#e44a5c" stroke="#42e08e" stroke-width="1.2"/>
<circle cx="314.5" cy="181.3" r="1.9" fill="#2c8a3c" stroke="#42e08e" stroke-width="1.2"/>
<circle cx="314.5" cy="187.05" r="1.9" fill="#e86a8a" stroke="#eea33c" stroke-width="1.2"/>
<circle cx="314.5" cy="192.8" r="1.9" fill="#e86a8a" stroke="#eea33c" stroke-width="1.2"/>
<circle cx="314.5" cy="198.55" r="1.9" fill="#e86a8a" stroke="#eea33c" stroke-width="1.2"/>
<circle cx="314.5" cy="204.3" r="1.5" fill="#e44a5c"/>
<circle cx="314.5" cy="210.05" r="1.5" fill="#e44a5c"/>
<circle cx="326" cy="187.05" r="2.3" fill="#2c8a3c" stroke="#3d9edd" stroke-width="1.3"/>
<text x="333.6" y="187.05" font-size="6.5" fill="#eef2f6" text-anchor="middle" font-weight="normal" font-family="Liberation Sans" dominant-baseline="central" >5</text>
<path d="M337.8 182 L349.5 182 L351 187.5 L339.5 192.5 Z" fill="#1656a6"/>
<text x="344.3" y="187.2" font-size="5.2" fill="#eef2f6" text-anchor="middle" font-weight="bold" font-family="Liberation Sans" dominant-baseline="central" >SWC</text>
<circle cx="343.25" cy="181.3" r="1.9" fill="#e44a5c" stroke="#42e08e" stroke-width="1.2"/>
<text x="357" y="187.05" font-size="6.3" fill="#eef2f6" text-anchor="middle" font-weight="normal" font-family="Liberation Sans" dominant-baseline="central" >157</text>
<text x="475" y="187.05" font-size="6.3" fill="#eef2f6" text-anchor="middle" font-weight="normal" font-family="Liberation Sans" dominant-baseline="central" >157</text>
<path d="M207 155 Q230 150 258.5 147.5 Q254 152 249 156.5 L210 156.5 Z" fill="#1656a6"/>
<text x="242.5" y="152.3" font-size="6.3" fill="#eef2f6" text-anchor="middle" font-weight="bold" font-family="Liberation Sans" dominant-baseline="central" >D30</text>
<circle cx="239.75" cy="146.8" r="1.5" fill="#e86a8a"/>
<circle cx="245.5" cy="146.8" r="2.0" fill="#e86a8a" stroke="#eea33c" stroke-width="1.3"/>
<circle cx="251.25" cy="146.8" r="2.0" fill="#2c8a3c" stroke="#eea33c" stroke-width="1.3"/>
<circle cx="257" cy="152.55" r="1.5" fill="#e86a8a"/>
<circle cx="211" cy="158.3" r="1.7" fill="#e44a5c"/>
<circle cx="216.75" cy="158.3" r="1.7" fill="#e44a5c"/>
<circle cx="222.5" cy="158.3" r="1.7" fill="#e44a5c"/>
<circle cx="228.25" cy="158.3" r="1.7" fill="#e44a5c"/>
<circle cx="234" cy="158.3" r="1.7" fill="#d05060"/>
<circle cx="239.75" cy="158.3" r="1.9" fill="#e44a5c" stroke="#e4e23a" stroke-width="1.2"/>
<circle cx="245.5" cy="158.3" r="1.9" fill="#2c8a3c" stroke="#e4e23a" stroke-width="1.2"/>
<circle cx="251.25" cy="158.3" r="1.9" fill="#e44a5c" stroke="#42e08e" stroke-width="1.2"/>
<path d="M263 130.5 L268 141 L257.5 141 Z" fill="#1656a6"/>
<text x="262.8" y="137.2" font-size="5" fill="#eef2f6" text-anchor="middle" font-weight="bold" font-family="Liberation Sans" dominant-baseline="central" >N</text>
<circle cx="262.75" cy="131.28" r="2.1" fill="#2c8a3c" stroke="#e4e23a" stroke-width="1.3"/>
<circle cx="262.75" cy="141.05" r="1.3" fill="#e86a8a"/>
<path d="M575.05 145 L582.45 152.55 L575.05 160.1 Z" fill="#1a4f9c" stroke="#1a4f9c" stroke-width="1.2" stroke-linejoin="round"/>
<text x="577.55" y="152.55" font-size="3.8" fill="#e8eef8" text-anchor="middle" font-weight="bold" font-family="Liberation Sans" dominant-baseline="central" transform="rotate(90 577.55 152.55)">AND</text>
<circle cx="573.25" cy="146.8" r="1.9" fill="#e44a5c" stroke="#42e08e" stroke-width="1.2"/>
<circle cx="573.25" cy="152.55" r="1.9" fill="#e44a5c" stroke="#42e08e" stroke-width="1.2"/>
<circle cx="573.25" cy="158.3" r="1.9" fill="#e44a5c" stroke="#42e08e" stroke-width="1.2"/>
<path d="M609.55 311.75 L616.95 319.3 L609.55 326.85 Z" fill="#1a4f9c" stroke="#1a4f9c" stroke-width="1.2" stroke-linejoin="round"/>
<text x="612.05" y="319.3" font-size="3.8" fill="#e8eef8" text-anchor="middle" font-weight="bold" font-family="Liberation Sans" dominant-baseline="central" transform="rotate(90 612.05 319.3)">AND</text>
<circle cx="607.75" cy="313.55" r="1.9" fill="#2c8a3c" stroke="#e4e23a" stroke-width="1.2"/>
<circle cx="607.75" cy="319.3" r="1.9" fill="#e44a5c" stroke="#42e08e" stroke-width="1.2"/>
<circle cx="607.75" cy="325.05" r="1.9" fill="#2c8a3c" stroke="#e4e23a" stroke-width="1.2"/>
<circle cx="584.75" cy="152.55" r="1.9" fill="#e44a5c" stroke="#42e08e" stroke-width="1.2"/>
<circle cx="619.25" cy="319.3" r="1.9" fill="#2c8a3c" stroke="#42e08e" stroke-width="1.2"/>
<path d="M655.7 143.3 L664.4 143.3 L657.5 162.3 Z" fill="#e0485e" filter="url(#glow2)" opacity="0.8"/>
<path d="M655.7 143.3 L664.4 143.3 L657.5 162.3 Z" fill="#d24a5a"/>
<text x="660.5" y="151.25" font-size="5.8" fill="#eef2f6" text-anchor="middle" font-weight="normal" font-family="Liberation Sans" dominant-baseline="central" >99</text>
<circle cx="653.75" cy="146.8" r="1.9" fill="#ee8a4a" stroke="#e146d3" stroke-width="1.2"/>
<circle cx="653.75" cy="152.55" r="1.9" fill="#ee9a4a" stroke="#42e08e" stroke-width="1.2"/>
<circle cx="653.75" cy="158.3" r="1.9" fill="#2c8a3c" stroke="#3d9edd" stroke-width="1.2"/>
<circle cx="665.25" cy="152.55" r="1.9" fill="#d08a50" stroke="#3d9edd" stroke-width="1.2"/>
<circle cx="665.25" cy="158.3" r="1.9" fill="#2c8a3c"/>
<path d="M655.7 200.8 L664.4 200.8 L657.5 219.8 Z" fill="#e0485e" filter="url(#glow2)" opacity="0.8"/>
<path d="M655.7 200.8 L664.4 200.8 L657.5 219.8 Z" fill="#d24a5a"/>
<text x="660.5" y="208.75" font-size="5.8" fill="#eef2f6" text-anchor="middle" font-weight="normal" font-family="Liberation Sans" dominant-baseline="central" >41</text>
<circle cx="653.75" cy="204.3" r="1.9" fill="#ee8a4a" stroke="#e146d3" stroke-width="1.2"/>
<circle cx="653.75" cy="210.05" r="1.9" fill="#ee9a4a" stroke="#42e08e" stroke-width="1.2"/>
<circle cx="653.75" cy="215.8" r="1.9" fill="#2c8a3c" stroke="#3d9edd" stroke-width="1.2"/>
<circle cx="665.25" cy="210.05" r="1.9" fill="#d08a50" stroke="#3d9edd" stroke-width="1.2"/>
<circle cx="665.25" cy="215.8" r="1.9" fill="#2c8a3c"/>
<path d="M655.7 258.3 L664.4 258.3 L657.5 277.3 Z" fill="#e0485e" filter="url(#glow2)" opacity="0.8"/>
<path d="M655.7 258.3 L664.4 258.3 L657.5 277.3 Z" fill="#d24a5a"/>
<text x="660.5" y="266.25" font-size="5.8" fill="#eef2f6" text-anchor="middle" font-weight="normal" font-family="Liberation Sans" dominant-baseline="central" >140</text>
<circle cx="653.75" cy="261.8" r="1.9" fill="#ee8a4a" stroke="#e146d3" stroke-width="1.2"/>
<circle cx="653.75" cy="267.55" r="1.9" fill="#ee9a4a" stroke="#42e08e" stroke-width="1.2"/>
<circle cx="653.75" cy="273.3" r="1.9" fill="#2c8a3c" stroke="#3d9edd" stroke-width="1.2"/>
<circle cx="665.25" cy="267.55" r="1.9" fill="#d08a50" stroke="#3d9edd" stroke-width="1.2"/>
<circle cx="665.25" cy="273.3" r="1.9" fill="#2c8a3c"/>
<path d="M655.7 315.8 L664.4 315.8 L657.5 334.8 Z" fill="#e0485e" filter="url(#glow2)" opacity="0.8"/>
<path d="M655.7 315.8 L664.4 315.8 L657.5 334.8 Z" fill="#d24a5a"/>
<text x="660.5" y="323.75" font-size="5.8" fill="#eef2f6" text-anchor="middle" font-weight="normal" font-family="Liberation Sans" dominant-baseline="central" >157</text>
<circle cx="653.75" cy="319.3" r="1.9" fill="#ee8a4a" stroke="#e146d3" stroke-width="1.2"/>
<circle cx="653.75" cy="325.05" r="1.9" fill="#ee9a4a" stroke="#42e08e" stroke-width="1.2"/>
<circle cx="653.75" cy="330.8" r="1.9" fill="#2c8a3c" stroke="#3d9edd" stroke-width="1.2"/>
<circle cx="665.25" cy="325.05" r="1.9" fill="#d08a50" stroke="#3d9edd" stroke-width="1.2"/>
<circle cx="665.25" cy="330.8" r="1.9" fill="#2c8a3c"/>
<path d="M655.7 373.3 L664.4 373.3 L657.5 392.3 Z" fill="#e0485e" filter="url(#glow2)" opacity="0.8"/>
<path d="M655.7 373.3 L664.4 373.3 L657.5 392.3 Z" fill="#d24a5a"/>
<text x="660.5" y="381.25" font-size="5.8" fill="#eef2f6" text-anchor="middle" font-weight="normal" font-family="Liberation Sans" dominant-baseline="central" >191</text>
<circle cx="653.75" cy="376.8" r="1.9" fill="#ee8a4a" stroke="#e146d3" stroke-width="1.2"/>
<circle cx="653.75" cy="382.55" r="1.9" fill="#ee9a4a" stroke="#42e08e" stroke-width="1.2"/>
<circle cx="653.75" cy="388.3" r="1.9" fill="#2c8a3c" stroke="#3d9edd" stroke-width="1.2"/>
<circle cx="665.25" cy="382.55" r="1.9" fill="#d08a50" stroke="#3d9edd" stroke-width="1.2"/>
<circle cx="665.25" cy="388.3" r="1.9" fill="#2c8a3c"/>
<path d="M655.7 430.8 L664.4 430.8 L657.5 449.8 Z" fill="#e0485e" filter="url(#glow2)" opacity="0.8"/>
<path d="M655.7 430.8 L664.4 430.8 L657.5 449.8 Z" fill="#d24a5a"/>
<text x="660.5" y="438.75" font-size="5.8" fill="#eef2f6" text-anchor="middle" font-weight="normal" font-family="Liberation Sans" dominant-baseline="central" >158</text>
<circle cx="653.75" cy="434.3" r="1.9" fill="#ee8a4a" stroke="#e146d3" stroke-width="1.2"/>
<circle cx="653.75" cy="440.05" r="1.9" fill="#ee9a4a" stroke="#42e08e" stroke-width="1.2"/>
<circle cx="653.75" cy="445.8" r="1.9" fill="#2c8a3c" stroke="#3d9edd" stroke-width="1.2"/>
<circle cx="665.25" cy="440.05" r="1.9" fill="#d08a50" stroke="#3d9edd" stroke-width="1.2"/>
<circle cx="665.25" cy="445.8" r="1.9" fill="#2c8a3c"/>
<rect x="731.3" y="206.8" width="11.7" height="23.1" fill="#17a3a8"/>
<text x="737" y="218" font-size="3.2" fill="#cfeff0" text-anchor="middle" font-weight="normal" font-family="Liberation Sans" dominant-baseline="central" >ADD</text>
<circle cx="728.5" cy="210.05" r="1.9" fill="#2c8a3c" stroke="#3d9edd" stroke-width="1.2"/>
<circle cx="728.5" cy="215.8" r="1.9" fill="#2c8a3c" stroke="#42e08e" stroke-width="1.2"/>
<circle cx="728.5" cy="221.55" r="1.9" fill="#2c8a3c" stroke="#42e08e" stroke-width="1.2"/>
<circle cx="745.75" cy="215.8" r="1.9" fill="#2c8a3c" stroke="#ee6a34" stroke-width="1.2"/>
<path d="M752 209.5 L763 209.5 L764 215.5 L753 222.5 Z" fill="#1656a6"/>
<circle cx="751.5" cy="215.8" r="1.9" fill="#2c8a3c" stroke="#ee6a34" stroke-width="1.2"/>
<circle cx="763" cy="215.8" r="1.9" fill="#2c8a3c" stroke="#3d9edd" stroke-width="1.2"/>
<circle cx="757.25" cy="210.05" r="1.9" fill="#2c8a3c" stroke="#e4e23a" stroke-width="1.3"/>
<text x="758" y="215.3" font-size="5.2" fill="#eef2f6" text-anchor="middle" font-weight="bold" font-family="Liberation Sans" dominant-baseline="central" >SWC</text>
<text x="719" y="210.05" font-size="6.2" fill="#eef2f6" text-anchor="middle" font-weight="normal" font-family="Liberation Sans" dominant-baseline="central" >5</text>
<text x="774.8" y="215.8" font-size="6.2" fill="#eef2f6" text-anchor="middle" font-weight="normal" font-family="Liberation Sans" dominant-baseline="central" >16</text>
<text x="706.7" y="221.55" font-size="6.2" fill="#eef2f6" text-anchor="middle" font-weight="normal" font-family="Liberation Sans" dominant-baseline="central" >140</text>
<text x="682" y="240" font-size="6.2" fill="#eef2f6" text-anchor="middle" font-weight="normal" font-family="Liberation Sans" dominant-baseline="central" >140</text>
<text x="677" y="273.3" font-size="6.2" fill="#eef2f6" text-anchor="middle" font-weight="normal" font-family="Liberation Sans" dominant-baseline="central" >140</text>
<text x="670" y="215.8" font-size="6.2" fill="#eef2f6" text-anchor="middle" font-weight="normal" font-family="Liberation Sans" dominant-baseline="central" >8</text>
<path d="M632 17.5 L640 17.5 Q642.5 17.5 642.5 20 L642.5 64 L632 64 Z" fill="#1656a6"/>
<text x="633.8" y="20.5" font-size="5.0" fill="#dfe8f5" text-anchor="start" font-weight="normal" font-family="Liberation Sans" dominant-baseline="central" transform="translate(633.8 0) scale(0.8 1) translate(-633.8 0)">1</text>
<text x="633.8" y="26.25" font-size="5.0" fill="#dfe8f5" text-anchor="start" font-weight="normal" font-family="Liberation Sans" dominant-baseline="central" transform="translate(633.8 0) scale(0.8 1) translate(-633.8 0)">2</text>
<text x="633.8" y="32" font-size="5.0" fill="#dfe8f5" text-anchor="start" font-weight="normal" font-family="Liberation Sans" dominant-baseline="central" transform="translate(633.8 0) scale(0.8 1) translate(-633.8 0)">4</text>
<text x="633.8" y="37.75" font-size="5.0" fill="#dfe8f5" text-anchor="start" font-weight="normal" font-family="Liberation Sans" dominant-baseline="central" transform="translate(633.8 0) scale(0.8 1) translate(-633.8 0)">8</text>
<text x="633.8" y="43.5" font-size="5.0" fill="#dfe8f5" text-anchor="start" font-weight="normal" font-family="Liberation Sans" dominant-baseline="central" transform="translate(633.8 0) scale(0.8 1) translate(-633.8 0)">16</text>
<text x="633.8" y="49.25" font-size="5.0" fill="#dfe8f5" text-anchor="start" font-weight="normal" font-family="Liberation Sans" dominant-baseline="central" transform="translate(633.8 0) scale(0.8 1) translate(-633.8 0)">32</text>
<text x="633.8" y="55" font-size="5.0" fill="#dfe8f5" text-anchor="start" font-weight="normal" font-family="Liberation Sans" dominant-baseline="central" transform="translate(633.8 0) scale(0.8 1) translate(-633.8 0)">64</text>
<text x="633.8" y="60.75" font-size="5.0" fill="#dfe8f5" text-anchor="start" font-weight="normal" font-family="Liberation Sans" dominant-baseline="central" transform="translate(633.8 0) scale(0.8 1) translate(-633.8 0)">128</text>
<path d="M636.3 35.25 l3.6 2.3 l-3.6 2.3 z" fill="#ffffff"/>
<circle cx="630.75" cy="20.3" r="1.9" fill="#2c8a3c" stroke="#eea33c" stroke-width="1.2"/>
<circle cx="630.75" cy="26.05" r="1.9" fill="#e86a8a" stroke="#eea33c" stroke-width="1.2"/>
<circle cx="630.75" cy="31.8" r="1.9" fill="#2c8a3c" stroke="#eea33c" stroke-width="1.2"/>
<circle cx="630.75" cy="37.55" r="1.5" fill="#e07282"/>
<circle cx="630.75" cy="43.3" r="1.5" fill="#e07282"/>
<circle cx="630.75" cy="49.05" r="1.5" fill="#e07282"/>
<circle cx="630.75" cy="54.8" r="1.5" fill="#e07282"/>
<circle cx="630.75" cy="60.55" r="1.5" fill="#e07282"/>
<circle cx="642.25" cy="37.55" r="2.3" fill="#2c8a3c" stroke="#3d9edd" stroke-width="1.3"/>
<text x="711.3" y="81.5" font-size="6.2" fill="#eef2f6" text-anchor="middle" font-weight="normal" font-family="Liberation Sans" dominant-baseline="central" >5</text>
<text x="601" y="72.5" font-size="6.2" fill="#eef2f6" text-anchor="middle" font-weight="normal" font-family="Liberation Sans" dominant-baseline="central" >0</text>
<path d="M526.9 468.6 A7.1 7.1 0 1 1 532.2 473.9 L530.2 470.6 Z" fill="#e0485e" filter="url(#glow2)" opacity="0.8"/>
<path d="M526.9 468.6 A7.1 7.1 0 1 1 532.2 473.9 L530.2 470.6 Z" fill="#dc4658"/>
<text x="534.4" y="466.4" font-size="6" fill="#eef2f6" text-anchor="middle" font-weight="bold" font-family="Liberation Sans" dominant-baseline="central" >0</text>
<circle cx="527.25" cy="468.8" r="1.9" fill="#ee8a4a" stroke="#e146d3" stroke-width="1.2"/>
<circle cx="533" cy="474.55" r="1.9" fill="#c88a4a" stroke="#3d9edd" stroke-width="1.2"/>
<path d="M779.7 475.6 A7.1 7.1 0 1 1 785 480.9 L783 477.6 Z" fill="#e0485e" filter="url(#glow2)" opacity="0.8"/>
<path d="M779.7 475.6 A7.1 7.1 0 1 1 785 480.9 L783 477.6 Z" fill="#dc4658"/>
<text x="787.2" y="473.4" font-size="6" fill="#eef2f6" text-anchor="middle" font-weight="bold" font-family="Liberation Sans" dominant-baseline="central" >0</text>
<circle cx="780.25" cy="474.55" r="1.9" fill="#2c8a3c" stroke="#3d9edd" stroke-width="1.2"/>
<circle cx="786" cy="480.3" r="1.9" fill="#ee8a4a" stroke="#42e08e" stroke-width="1.2"/>
<text x="584.5" y="175.5" font-size="6.2" fill="#eef2f6" text-anchor="middle" font-weight="normal" font-family="Liberation Sans" dominant-baseline="central" >157</text>
<text x="584.5" y="213.75" font-size="6.2" fill="#eef2f6" text-anchor="middle" font-weight="normal" font-family="Liberation Sans" dominant-baseline="central" >157</text>
<text x="584.5" y="261.75" font-size="6.2" fill="#eef2f6" text-anchor="middle" font-weight="normal" font-family="Liberation Sans" dominant-baseline="central" >157</text>
<text x="584.5" y="318.75" font-size="6.2" fill="#eef2f6" text-anchor="middle" font-weight="normal" font-family="Liberation Sans" dominant-baseline="central" >157</text>
<text x="584.5" y="330.6" font-size="6.2" fill="#eef2f6" text-anchor="middle" font-weight="normal" font-family="Liberation Sans" dominant-baseline="central" >157</text>
<text x="584.5" y="376.5" font-size="6.2" fill="#eef2f6" text-anchor="middle" font-weight="normal" font-family="Liberation Sans" dominant-baseline="central" >157</text>
<text x="584.5" y="411.75" font-size="6.2" fill="#eef2f6" text-anchor="middle" font-weight="normal" font-family="Liberation Sans" dominant-baseline="central" >157</text>
<text x="584.5" y="445.5" font-size="6.2" fill="#eef2f6" text-anchor="middle" font-weight="normal" font-family="Liberation Sans" dominant-baseline="central" >157</text>
<text x="671" y="198.75" font-size="6.2" fill="#eef2f6" text-anchor="middle" font-weight="normal" font-family="Liberation Sans" dominant-baseline="central" >157</text>
<text x="671" y="256.2" font-size="6.2" fill="#eef2f6" text-anchor="middle" font-weight="normal" font-family="Liberation Sans" dominant-baseline="central" >157</text>
<text x="671" y="267.75" font-size="6.2" fill="#eef2f6" text-anchor="middle" font-weight="normal" font-family="Liberation Sans" dominant-baseline="central" >157</text>
<text x="671" y="303.75" font-size="6.2" fill="#eef2f6" text-anchor="middle" font-weight="normal" font-family="Liberation Sans" dominant-baseline="central" >157</text>
<text x="671" y="371.25" font-size="6.2" fill="#eef2f6" text-anchor="middle" font-weight="normal" font-family="Liberation Sans" dominant-baseline="central" >157</text>
<text x="671" y="403.5" font-size="6.2" fill="#eef2f6" text-anchor="middle" font-weight="normal" font-family="Liberation Sans" dominant-baseline="central" >157</text>
<text x="671" y="437" font-size="6.2" fill="#eef2f6" text-anchor="middle" font-weight="normal" font-family="Liberation Sans" dominant-baseline="central" >157</text>
<text x="671" y="450.75" font-size="6.2" fill="#eef2f6" text-anchor="middle" font-weight="normal" font-family="Liberation Sans" dominant-baseline="central" >157</text>
<text x="780" y="357" font-size="6.2" fill="#eef2f6" text-anchor="middle" font-weight="normal" font-family="Liberation Sans" dominant-baseline="central" >157</text>
<text x="780" y="389" font-size="6.2" fill="#eef2f6" text-anchor="middle" font-weight="normal" font-family="Liberation Sans" dominant-baseline="central" >157</text>
<text x="661" y="474.4" font-size="6.2" fill="#eef2f6" text-anchor="middle" font-weight="normal" font-family="Liberation Sans" dominant-baseline="central" >157</text>
<text x="692.4" y="474.4" font-size="6.2" fill="#eef2f6" text-anchor="middle" font-weight="normal" font-family="Liberation Sans" dominant-baseline="central" >157</text>
<text x="552.5" y="474.4" font-size="6.2" fill="#eef2f6" text-anchor="middle" font-weight="normal" font-family="Liberation Sans" dominant-baseline="central" >157</text>
<text x="776" y="471" font-size="6.2" fill="#eef2f6" text-anchor="middle" font-weight="normal" font-family="Liberation Sans" dominant-baseline="central" >157</text>
<text x="644.5" y="273" font-size="6.2" fill="#eef2f6" text-anchor="middle" font-weight="normal" font-family="Liberation Sans" dominant-baseline="central" >157</text>
<text x="602" y="199.5" font-size="6.2" fill="#eef2f6" text-anchor="middle" font-weight="normal" font-family="Liberation Sans" dominant-baseline="central" >0</text>
<text x="567.5" y="131" font-size="6.2" fill="#eef2f6" text-anchor="middle" font-weight="normal" font-family="Liberation Sans" dominant-baseline="central" >0</text>
<text x="595.5" y="152.3" font-size="6.2" fill="#eef2f6" text-anchor="middle" font-weight="normal" font-family="Liberation Sans" dominant-baseline="central" >0</text>
<text x="61" y="61" font-size="6.4" fill="#d8dde2" text-anchor="middle" font-weight="bold" font-family="Liberation Sans" dominant-baseline="central" >20</text>

</svg>
</body></html>
